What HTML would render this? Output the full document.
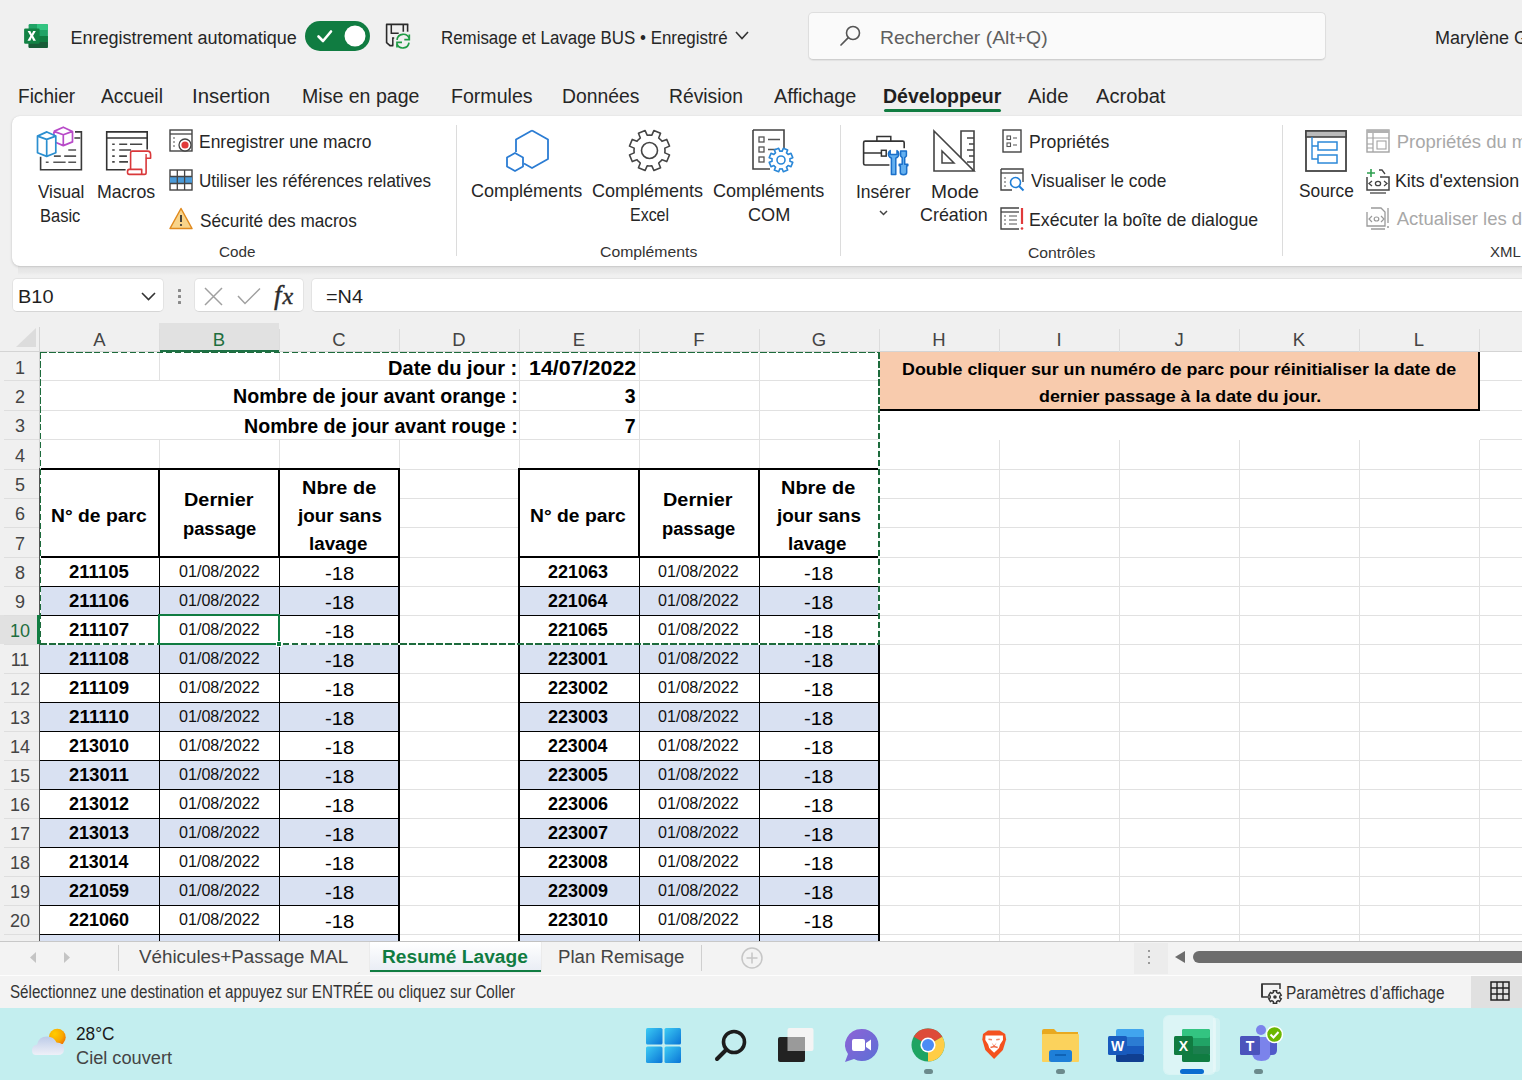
<!DOCTYPE html><html><head><meta charset="utf-8"><style>
html,body{margin:0;padding:0;}
body{width:1522px;height:1080px;position:relative;overflow:hidden;background:#f0f0f0;font-family:"Liberation Sans",sans-serif;}
.t{position:absolute;white-space:nowrap;line-height:1;}
.b{position:absolute;box-sizing:border-box;}
svg{position:absolute;overflow:visible;}
</style></head><body>
<div class="b" style="left:0px;top:0px;width:1522px;height:116px;background:#f0f0f0;"></div>
<svg style="left:20px;top:20px;" width="32" height="32" viewBox="0 0 32 32">
<rect x="8.6" y="4" width="19.3" height="23.9" rx="1.2" fill="#21a366"/>
<path d="M17 4 H26.7 Q27.9 4 27.9 5.2 V10 H17 Z" fill="#33c481"/>
<rect x="8.6" y="16" width="19.3" height="6" fill="#107c41"/>
<path d="M8.6 22 H27.9 V26.7 Q27.9 27.9 26.7 27.9 H9.8 Q8.6 27.9 8.6 26.7 Z" fill="#185c37"/>
<rect x="4.1" y="8.6" width="15.5" height="15.1" rx="1.2" fill="#128244"/>
<path d="M7.6 11 H10.3 L11.75 14.1 L13.2 11 H15.8 L13.1 15.85 L15.9 20.7 H13.2 L11.75 17.5 L10.3 20.7 H7.5 L10.35 15.85 Z" fill="#fff"/>
</svg>
<div id="t0" class="t" style="left:70.56px;transform-origin:0 0;top:28.76px;font-size:18px;color:#262626;font-weight:normal;">Enregistrement automatique</div>
<div class="b" style="left:305px;top:21px;width:65px;height:30px;background:#107c41;border-radius:15px;"></div>
<svg style="left:305px;top:21px;" width="65" height="30" viewBox="0 0 65 30"><path d="M13.5 15.5 L18 20 L26 10.5" stroke="#fff" stroke-width="2.6" fill="none" stroke-linecap="round" stroke-linejoin="round"/><circle cx="50" cy="15" r="10.5" fill="#fff"/></svg>
<svg style="left:380px;top:18px;" width="36" height="36" viewBox="0 0 36 36">
<path d="M28.3 6.4 H6.6 V24.7 L10 27.6 H13.3 M23.3 6.4 V13.7" stroke="#2a2a2a" stroke-width="1.6" fill="none" stroke-linejoin="round"/>
<path d="M27.6 6.4 V13.7" stroke="#2a2a2a" stroke-width="1.6"/>
<path d="M11.3 6.6 V15.3 H18.7" stroke="#2a2a2a" stroke-width="1.5" fill="none"/>
<path d="M14.2 20 H12.8 V27.5" stroke="#2a2a2a" stroke-width="1.5" fill="none"/>
<path d="M17 21.8 A6.3 6.3 0 0 1 29.2 20.5" stroke="#1f9b45" stroke-width="1.7" fill="none"/>
<path d="M24.3 21.6 H29.3 V16.6" stroke="#1f9b45" stroke-width="1.7" fill="none"/>
<path d="M29 24.6 A6.3 6.3 0 0 1 17 26.2" stroke="#1f9b45" stroke-width="1.7" fill="none"/>
<path d="M22 24.4 H17 V29.4" stroke="#1f9b45" stroke-width="1.7" fill="none"/>
</svg>
<div id="t1" class="t" style="left:440.65px;transform-origin:0 0;top:28.76px;font-size:18px;color:#262626;font-weight:normal;transform:scaleX(0.9383);">Remisage et Lavage BUS • Enregistré</div>
<svg style="left:735px;top:31px;" width="14" height="9" viewBox="0 0 14 9"><path d="M1 1 L7 7.5 L13 1" stroke="#333" stroke-width="1.6" fill="none"/></svg>
<div class="b" style="left:808px;top:12px;width:518px;height:48px;background:#fafafa;border:1px solid #dedede;border-bottom-color:#cfcfcf;border-radius:5px;box-shadow:0 1px 1px rgba(0,0,0,0.06);"></div>
<svg style="left:840px;top:25px;" width="22" height="22" viewBox="0 0 22 22"><circle cx="13" cy="8" r="6.5" stroke="#555" stroke-width="1.6" fill="none"/><path d="M8.3 12.7 L1 20" stroke="#555" stroke-width="1.7" stroke-linecap="round"/></svg>
<div id="t2" class="t" style="left:880.45px;transform-origin:0 0;top:29.34px;font-size:18.5px;color:#5f5f5f;font-weight:normal;transform:scaleX(1.0487);">Rechercher (Alt+Q)</div>
<div id="t3" class="t" style="left:1435px;top:28.76px;font-size:18px;color:#262626;font-weight:normal;">Marylène G</div>
<div id="t4" class="t" style="left:17.98px;transform-origin:0 0;top:87.49px;font-size:19.5px;color:#262626;font-weight:normal;transform:scaleX(0.9762);">Fichier</div>
<div id="t5" class="t" style="left:101.20px;transform-origin:0 0;top:87.49px;font-size:19.5px;color:#262626;font-weight:normal;transform:scaleX(0.9848);">Accueil</div>
<div id="t6" class="t" style="left:192.47px;transform-origin:0 0;top:87.49px;font-size:19.5px;color:#262626;font-weight:normal;transform:scaleX(1.0451);">Insertion</div>
<div id="t7" class="t" style="left:301.94px;transform-origin:0 0;top:87.49px;font-size:19.5px;color:#262626;font-weight:normal;transform:scaleX(1.0030);">Mise en page</div>
<div id="t8" class="t" style="left:451.03px;transform-origin:0 0;top:87.49px;font-size:19.5px;color:#262626;font-weight:normal;transform:scaleX(1.0040);">Formules</div>
<div id="t9" class="t" style="left:562.05px;transform-origin:0 0;top:87.49px;font-size:19.5px;color:#262626;font-weight:normal;transform:scaleX(0.9913);">Données</div>
<div id="t10" class="t" style="left:668.86px;transform-origin:0 0;top:87.49px;font-size:19.5px;color:#262626;font-weight:normal;transform:scaleX(0.9893);">Révision</div>
<div id="t11" class="t" style="left:773.50px;transform-origin:0 0;top:87.49px;font-size:19.5px;color:#262626;font-weight:normal;transform:scaleX(1.0170);">Affichage</div>
<div id="t12" class="t" style="left:883.33px;transform-origin:0 0;top:87.49px;font-size:19.5px;color:#1f1f1f;font-weight:bold;transform:scaleX(1.0021);">Développeur</div>
<div id="t13" class="t" style="left:1028.00px;transform-origin:0 0;top:87.49px;font-size:19.5px;color:#262626;font-weight:normal;transform:scaleX(1.0361);">Aide</div>
<div id="t14" class="t" style="left:1096.20px;transform-origin:0 0;top:87.49px;font-size:19.5px;color:#262626;font-weight:normal;transform:scaleX(1.0331);">Acrobat</div>
<div class="b" style="left:884px;top:109px;width:117px;height:3px;background:#107c41;border-radius:1.5px;"></div>
<div class="b" style="left:12px;top:116px;width:1530px;height:150px;background:#fff;border-radius:8px;box-shadow:0 1px 3px rgba(0,0,0,0.16), 0 0 1px rgba(0,0,0,0.10);"></div>
<div class="b" style="left:456px;top:125px;width:1px;height:131px;background:#dcdcdc;"></div>
<div class="b" style="left:840px;top:125px;width:1px;height:131px;background:#dcdcdc;"></div>
<div class="b" style="left:1282px;top:125px;width:1px;height:131px;background:#dcdcdc;"></div>
<svg style="left:30px;top:120px;" width="60" height="60" viewBox="0 0 60 60">
<path d="M45 11.9 H51.4 V49.7 H10.6 V36.7" stroke="#3a3a3a" stroke-width="1.6" fill="none"/>
<path d="M44.4 18 H50.3" stroke="#3a3a3a" stroke-width="1.5"/>
<path d="M38.3 30 H46.1 M23.9 36.1 H30.8 M34.2 36.1 H46.1 M15.8 42.2 H18.6 M23.3 42.2 H35.6 M38.3 42.2 H46.1" stroke="#555" stroke-width="1.6"/>
<path d="M23.9 11.4 L33.3 7.2 L42.5 11.4 V21.9 L33.3 25.6 L26 22.5 M23.9 11.4 V16 M23.9 11.4 L33.3 14.7 L42.5 11.4 M33.3 14.7 V25.6" stroke="#b84ac8" stroke-width="1.7" fill="none" stroke-linejoin="round"/>
<path d="M7.5 16.1 L16.9 11.9 L25.8 16.1 V32.8 L16.7 36.4 L7.5 32.8 Z" stroke="#2b8fd0" stroke-width="1.7" fill="#fff" stroke-linejoin="round"/>
<path d="M7.5 16.1 L16.7 19.4 L25.8 16.1 M16.7 19.4 V36.4" stroke="#2b8fd0" stroke-width="1.7" fill="none" stroke-linejoin="round"/>
</svg>
<div id="t15" class="t" style="left:38.40px;transform-origin:0 0;top:182.94px;font-size:18.5px;color:#262626;font-weight:normal;transform:scaleX(0.9256);">Visual</div>
<div id="t16" class="t" style="left:40.08px;transform-origin:0 0;top:206.54px;font-size:18.5px;color:#262626;font-weight:normal;transform:scaleX(0.8915);">Basic</div>
<svg style="left:100px;top:125px;" width="60" height="60" viewBox="0 0 60 60">
<path d="M47.2 24.4 V6.9 H6.7 V44.7 H25.6" stroke="#333" stroke-width="1.6" fill="none"/>
<path d="M6.7 13 H47.2" stroke="#333" stroke-width="1.5"/>
<path d="M12.2 19.2 H14.7 M19.2 19.2 H27.2 M30 19.2 H42.2 M12.2 25 H14.7 M19.2 25 H31.1 M12.2 31.1 H14.7 M19.2 31.1 H26.9 M12.2 36.9 H14.7 M19.2 36.9 H28" stroke="#444" stroke-width="1.6"/>
<path d="M30.6 44.4 V27.8 Q30.6 26.1 32.3 26.1 H47.6 Q50.6 26.1 50.6 29.7 V33.3 H46.1 V47.7 Q46.1 49.4 44.4 49.4 H29.2 Q27.5 49.4 27.5 46.9 Q27.5 44.4 29.2 44.4 H41.7 V49.4" stroke="#d9383a" stroke-width="1.6" fill="#fff" stroke-linejoin="round"/>
<path d="M46.1 29 V33.3" stroke="#d9383a" stroke-width="1.4"/>
</svg>
<div id="t17" class="t" style="left:97.38px;transform-origin:0 0;top:182.94px;font-size:18.5px;color:#262626;font-weight:normal;transform:scaleX(0.9597);">Macros</div>
<svg style="left:169px;top:129px;" width="24" height="24" viewBox="0 0 24 24">
<rect x="1" y="1" width="22" height="21" stroke="#444" stroke-width="1.4" fill="#fff"/>
<path d="M1 5 H23" stroke="#444" stroke-width="1.3"/>
<path d="M4 9 H6 M4 13 H6 M4 17 H6" stroke="#555" stroke-width="1.2"/>
<circle cx="16" cy="16" r="6" fill="#fff" stroke="#444" stroke-width="1.3"/>
<circle cx="16" cy="16" r="3.6" fill="#e03a3a"/>
</svg>
<div id="t18" class="t" style="left:199.20px;transform-origin:0 0;top:133.14px;font-size:18.5px;color:#262626;font-weight:normal;transform:scaleX(0.9427);">Enregistrer une macro</div>
<svg style="left:169px;top:169px;" width="24" height="22" viewBox="0 0 24 22">
<rect x="1" y="1" width="22" height="20" stroke="#444" stroke-width="1.4" fill="#fff"/>
<rect x="1" y="7.5" width="22" height="7" fill="#4a9ad8"/>
<path d="M1 7.5 H23 M1 14.5 H23 M8.3 1 V21 M15.6 1 V21" stroke="#444" stroke-width="1.3"/>
</svg>
<div id="t19" class="t" style="left:199.32px;transform-origin:0 0;top:172.34px;font-size:18.5px;color:#262626;font-weight:normal;transform:scaleX(0.9206);">Utiliser les références relatives</div>
<svg style="left:169px;top:207px;" width="24" height="23" viewBox="0 0 24 23">
<path d="M12 1.5 L23 21.5 H1 Z" fill="#f8d48a" stroke="#e08a1e" stroke-width="1.5" stroke-linejoin="round"/>
<path d="M12 8 V15" stroke="#333" stroke-width="1.8"/><circle cx="12" cy="18" r="1.1" fill="#333"/>
</svg>
<div id="t20" class="t" style="left:199.83px;transform-origin:0 0;top:211.64px;font-size:18.5px;color:#262626;font-weight:normal;transform:scaleX(0.9298);">Sécurité des macros</div>
<div id="t21" class="t" style="left:218.94px;transform-origin:0 0;top:244.48px;font-size:15.5px;color:#333;font-weight:normal;transform:scaleX(0.9844);">Code</div>
<svg style="left:506px;top:129px;" width="44" height="44" viewBox="0 0 44 44">
<path d="M26 1.5 L42 10.5 V30 L26 39 L18 34.5 M10 23 V10.5 L26 1.5" stroke="#2b7cd3" stroke-width="1.8" fill="none" stroke-linejoin="round"/>
<path d="M9 24 L17 28.5 V37.5 L9 42 L1 37.5 V28.5 Z" stroke="#2b7cd3" stroke-width="1.8" fill="none" stroke-linejoin="round"/>
</svg>
<div id="t22" class="t" style="left:471.40px;transform-origin:0 0;top:182.04px;font-size:18.5px;color:#262626;font-weight:normal;transform:scaleX(0.9743);">Compléments</div>
<svg style="left:628px;top:129px;" width="43" height="43" viewBox="0 0 43 43"><path d="M37.00 21.50 L36.82 23.86 L41.52 25.89 L38.77 32.55 L34.00 30.66 L32.46 32.46 L30.66 34.00 L32.55 38.77 L25.89 41.52 L23.86 36.82 L21.50 37.00 L19.14 36.82 L17.11 41.52 L10.45 38.77 L12.34 34.00 L10.54 32.46 L9.00 30.66 L4.23 32.55 L1.48 25.89 L6.18 23.86 L6.00 21.50 L6.18 19.14 L1.48 17.11 L4.23 10.45 L9.00 12.34 L10.54 10.54 L12.34 9.00 L10.45 4.23 L17.11 1.48 L19.14 6.18 L21.50 6.00 L23.86 6.18 L25.89 1.48 L32.55 4.23 L30.66 9.00 L32.46 10.54 L34.00 12.34 L38.77 10.45 L41.52 17.11 L36.82 19.14 Z" stroke="#444" stroke-width="1.6" fill="none" stroke-linejoin="round"/><circle cx="21.5" cy="21.5" r="8" stroke="#444" stroke-width="1.6" fill="none"/></svg>
<div id="t23" class="t" style="left:592.30px;transform-origin:0 0;top:182.04px;font-size:18.5px;color:#262626;font-weight:normal;transform:scaleX(0.9735);">Compléments</div>
<div id="t24" class="t" style="left:629.52px;transform-origin:0 0;top:205.74px;font-size:18.5px;color:#262626;font-weight:normal;transform:scaleX(0.8627);">Excel</div>
<svg style="left:752px;top:129px;" width="44" height="46" viewBox="0 0 44 46">
<path d="M1 1 H32 V24 M1 1 V40 H18" stroke="#444" stroke-width="1.6" fill="none"/>
<rect x="7" y="8" width="5" height="5" stroke="#555" stroke-width="1.3" fill="none"/>
<rect x="7" y="18" width="5" height="5" stroke="#555" stroke-width="1.3" fill="none"/>
<rect x="7" y="28" width="5" height="5" stroke="#555" stroke-width="1.3" fill="none"/>
<path d="M16 10.5 H28 M16 20.5 H24" stroke="#555" stroke-width="1.3"/>
<path d="M38.00 31.00 L37.92 32.20 L40.77 33.34 L38.98 37.67 L36.15 36.46 L35.36 37.36 L34.46 38.15 L35.67 40.98 L31.34 42.77 L30.20 39.92 L29.00 40.00 L27.80 39.92 L26.66 42.77 L22.33 40.98 L23.54 38.15 L22.64 37.36 L21.85 36.46 L19.02 37.67 L17.23 33.34 L20.08 32.20 L20.00 31.00 L20.08 29.80 L17.23 28.66 L19.02 24.33 L21.85 25.54 L22.64 24.64 L23.54 23.85 L22.33 21.02 L26.66 19.23 L27.80 22.08 L29.00 22.00 L30.20 22.08 L31.34 19.23 L35.67 21.02 L34.46 23.85 L35.36 24.64 L36.15 25.54 L38.98 24.33 L40.77 28.66 L37.92 29.80 Z" stroke="#2b88d8" stroke-width="1.6" fill="#fff" stroke-linejoin="round"/>
<circle cx="29" cy="31" r="4" stroke="#2b88d8" stroke-width="1.6" fill="none"/>
</svg>
<div id="t25" class="t" style="left:713.10px;transform-origin:0 0;top:182.04px;font-size:18.5px;color:#262626;font-weight:normal;transform:scaleX(0.9743);">Compléments</div>
<div id="t26" class="t" style="left:748.09px;transform-origin:0 0;top:205.74px;font-size:18.5px;color:#262626;font-weight:normal;transform:scaleX(0.9804);">COM</div>
<div id="t27" class="t" style="left:599.51px;transform-origin:0 0;top:244.48px;font-size:15.5px;color:#333;font-weight:normal;transform:scaleX(1.0178);">Compléments</div>
<svg style="left:855px;top:125px;" width="60" height="60" viewBox="0 0 60 60">
<path d="M34.4 40 H10.2 Q8.6 40 8.6 38.4 V17.7 Q8.6 16.1 10.2 16.1 H47.6 Q49.2 16.1 49.2 17.7 V23.3" stroke="#333" stroke-width="1.6" fill="#fff"/>
<path d="M21.9 16.1 V11.4 H35.8 V16.1" stroke="#333" stroke-width="1.5" fill="none"/>
<path d="M8.6 28 H26.1" stroke="#333" stroke-width="1.5"/>
<rect x="26.4" y="25.3" width="4.8" height="5.8" stroke="#333" stroke-width="1.5" fill="#fff"/>
<path d="M36.4 33.3 V49.4 H40.8 V33.3 Q44 31.8 43.8 28.6 Q43.6 26.6 42 25.6 V29.6 H35.2 V25.6 Q33.5 26.6 33.4 28.6 Q33.3 31.8 36.4 33.3 Z" fill="#64b0f0" stroke="#1a6fc9" stroke-width="1.5" stroke-linejoin="round"/>
<path d="M45.6 26.1 H51.4 V31 L49.7 32.8 V39.2 H52.8 V40.8 H51.7 V47.5 Q51.7 49.7 48.5 49.7 Q45.3 49.7 45.3 47.5 V40.8 H44.2 V39.2 H47.2 V32.8 L45.6 31 Z" fill="#64b0f0" stroke="#1a6fc9" stroke-width="1.5" stroke-linejoin="round"/>
</svg>
<div id="t28" class="t" style="left:856.12px;transform-origin:0 0;top:182.54px;font-size:18.5px;color:#262626;font-weight:normal;transform:scaleX(0.9465);">Insérer</div>
<svg style="left:879px;top:210px;" width="9" height="6" viewBox="0 0 9 6"><path d="M1 1 L4.5 4.5 L8 1" stroke="#444" stroke-width="1.5" fill="none"/></svg>
<svg style="left:933px;top:130px;" width="44" height="44" viewBox="0 0 44 44">
<path d="M1 1 L41 41 H1 Z" stroke="#444" stroke-width="1.6" fill="none" stroke-linejoin="miter"/>
<path d="M9 21 L21 33 H9 Z" stroke="#444" stroke-width="1.5" fill="none"/>
<path d="M28 28 V1 H41 V41" stroke="#444" stroke-width="1.6" fill="none"/>
<path d="M34 8 H41 M36 14 H41 M34 20 H41 M36 26 H41 M34 32 H41" stroke="#444" stroke-width="1.3"/>
</svg>
<div id="t29" class="t" style="left:930.76px;transform-origin:0 0;top:182.54px;font-size:18.5px;color:#262626;font-weight:normal;transform:scaleX(1.0379);">Mode</div>
<div id="t30" class="t" style="left:920.41px;transform-origin:0 0;top:206.24px;font-size:18.5px;color:#262626;font-weight:normal;transform:scaleX(0.9675);">Création</div>
<svg style="left:1002px;top:129px;" width="20" height="24" viewBox="0 0 20 24">
<rect x="1" y="1" width="18" height="22" stroke="#444" stroke-width="1.4" fill="#fff"/>
<rect x="5" y="7" width="3.5" height="3.5" stroke="#555" stroke-width="1.1" fill="none"/>
<rect x="5" y="14" width="3.5" height="3.5" stroke="#555" stroke-width="1.1" fill="none"/>
<path d="M11 9 H15 M11 16 H15" stroke="#555" stroke-width="1.2"/>
</svg>
<div id="t31" class="t" style="left:1029.29px;transform-origin:0 0;top:133.14px;font-size:18.5px;color:#262626;font-weight:normal;transform:scaleX(0.9520);">Propriétés</div>
<svg style="left:1000px;top:168px;" width="25" height="24" viewBox="0 0 25 24">
<path d="M1 1 H23 V14 M1 1 V22 H12" stroke="#444" stroke-width="1.4" fill="none"/>
<path d="M1 5 H23" stroke="#444" stroke-width="1.3"/>
<path d="M4 10 H6 M4 14 H6 M4 18 H6" stroke="#555" stroke-width="1.2"/>
<circle cx="15.5" cy="14.5" r="5" stroke="#1f7ed6" stroke-width="1.6" fill="#fff"/>
<path d="M19 18 L23.5 22.5" stroke="#1f7ed6" stroke-width="2"/>
</svg>
<div id="t32" class="t" style="left:1030.70px;transform-origin:0 0;top:171.64px;font-size:18.5px;color:#262626;font-weight:normal;transform:scaleX(0.9352);">Visualiser le code</div>
<svg style="left:1000px;top:207px;" width="25" height="24" viewBox="0 0 25 24">
<path d="M19 1 H1 V22 H19" stroke="#444" stroke-width="1.4" fill="none"/>
<path d="M1 5 H19" stroke="#444" stroke-width="1.3"/>
<path d="M4 9 H6 M9 9 H17 M4 13 H6 M9 13 H17 M4 17 H6 M9 17 H17" stroke="#555" stroke-width="1.2"/>
<path d="M22 1 V17" stroke="#e03a3a" stroke-width="2.2"/><circle cx="22" cy="21.5" r="1.3" fill="#e03a3a"/>
</svg>
<div id="t33" class="t" style="left:1029.28px;transform-origin:0 0;top:210.64px;font-size:18.5px;color:#262626;font-weight:normal;transform:scaleX(0.9564);">Exécuter la boîte de dialogue</div>
<div id="t34" class="t" style="left:1027.61px;transform-origin:0 0;top:244.88px;font-size:15.5px;color:#333;font-weight:normal;transform:scaleX(1.0135);">Contrôles</div>
<svg style="left:1305px;top:130px;" width="42" height="42" viewBox="0 0 42 42">
<rect x="1" y="1" width="40" height="40" stroke="#444" stroke-width="1.8" fill="#fff"/>
<rect x="1" y="1" width="40" height="6" fill="#bbb" stroke="#444" stroke-width="1.6"/>
<path d="M7 7 V29 H13 M7 16 H13" stroke="#2b88d8" stroke-width="1.4" fill="none"/>
<rect x="13" y="12" width="19" height="8" stroke="#2b88d8" stroke-width="1.5" fill="none"/>
<rect x="13" y="25" width="19" height="8" stroke="#2b88d8" stroke-width="1.5" fill="none"/>
</svg>
<div id="t35" class="t" style="left:1298.72px;transform-origin:0 0;top:181.74px;font-size:18.5px;color:#262626;font-weight:normal;transform:scaleX(0.9354);">Source</div>
<svg style="left:1366px;top:129px;opacity:0.9;" width="24" height="24" viewBox="0 0 24 24">
<rect x="1" y="1" width="22" height="22" stroke="#9a9a9a" stroke-width="1.4" fill="#fff"/>
<rect x="1" y="1" width="22" height="3" fill="#aaa"/>
<path d="M1 9 H23 M7 4 V23 M1 15 H7 M1 19 H7" stroke="#9a9a9a" stroke-width="1.2"/>
<rect x="11" y="12" width="9" height="8" stroke="#9a9a9a" stroke-width="1.1" fill="none"/>
</svg>
<div id="t36" class="t" style="left:1396.7px;top:132.64px;font-size:18.5px;color:#a8a8a8;font-weight:normal;">Propriétés du mappage</div>
<svg style="left:1366px;top:168px;" width="24" height="25" viewBox="0 0 24 25">
<path d="M1 9 V22 H23 V9 H14" stroke="#444" stroke-width="1.5" fill="none"/>
<path d="M13 2 H16 L19 6" stroke="#444" stroke-width="1.3" fill="none"/>
<path d="M6 13 L3 15.5 L6 18 M18 13 L21 15.5 L18 18" stroke="#444" stroke-width="1.3" fill="none"/>
<ellipse cx="12" cy="15.5" rx="2.6" ry="2.2" stroke="#444" stroke-width="1.3" fill="none"/>
<path d="M4 25 H20" stroke="#444" stroke-width="1.3"/>
<path d="M5 1 V9 M1 5 H9" stroke="#2ea04f" stroke-width="1.6"/>
</svg>
<div id="t37" class="t" style="left:1395.28px;transform-origin:0 0;top:171.84px;font-size:18.5px;color:#262626;font-weight:normal;transform:scaleX(0.9623);">Kits d'extension</div>
<svg style="left:1366px;top:207px;" width="24" height="25" viewBox="0 0 24 25">
<path d="M1 5 V19 H19 V5 L15 1 H5" stroke="#9a9a9a" stroke-width="1.3" fill="none"/>
<path d="M6 9 L3 12 L6 15 M15 9 L18 12 L15 15" stroke="#9a9a9a" stroke-width="1.2" fill="none"/>
<ellipse cx="10.5" cy="12" rx="2.3" ry="2" stroke="#9a9a9a" stroke-width="1.2" fill="none"/>
<path d="M5 22 H19 M22 1 V16" stroke="#9a9a9a" stroke-width="1.3"/><circle cx="22" cy="20" r="1" fill="#9a9a9a"/>
</svg>
<div id="t38" class="t" style="left:1396.7px;top:210.34px;font-size:18.5px;color:#a8a8a8;font-weight:normal;">Actualiser les données</div>
<div id="t39" class="t" style="left:1489.70px;transform-origin:0 0;top:244.38px;font-size:15.5px;color:#333;font-weight:normal;transform:scaleX(0.9652);">XML</div>
<div class="b" style="left:18px;top:266px;width:1504px;height:9px;background:linear-gradient(#c6c6c6 0px,#dedede 1.5px,#e6e6e6 3px,#e8e8e8 6px,#f0f0f0 9px);z-index:0;"></div>
<div class="b" style="left:12px;top:278px;width:152px;height:34px;background:#fff;border:1px solid #e3e3e3;border-bottom-color:#d6d6d6;border-radius:5px;"></div>
<div id="t40" class="t" style="left:18.20px;transform-origin:0 0;top:288.04px;font-size:18.5px;color:#1f1f1f;font-weight:normal;transform:scaleX(1.0777);">B10</div>
<svg style="left:141px;top:292px;" width="15" height="9" viewBox="0 0 15 9"><path d="M1 1 L7.5 7.5 L14 1" stroke="#333" stroke-width="1.6" fill="none"/></svg>
<div class="b" style="left:177.5px;top:289px;width:3px;height:3px;background:#8a8a8a;border-radius:0.5px;"></div>
<div class="b" style="left:177.5px;top:295px;width:3px;height:3px;background:#8a8a8a;border-radius:0.5px;"></div>
<div class="b" style="left:177.5px;top:301px;width:3px;height:3px;background:#8a8a8a;border-radius:0.5px;"></div>
<div class="b" style="left:194px;top:278px;width:110px;height:34px;background:#fff;border:1px solid #e3e3e3;border-bottom-color:#d6d6d6;border-radius:5px;"></div>
<svg style="left:204px;top:287px;" width="19" height="19" viewBox="0 0 19 19"><path d="M1 1 L18 18 M18 1 L1 18" stroke="#a0a0a0" stroke-width="1.5"/></svg>
<svg style="left:237px;top:287px;" width="24" height="18" viewBox="0 0 24 18"><path d="M1 9 L8 16.5 L23 1.5" stroke="#a0a0a0" stroke-width="1.5" fill="none"/></svg>
<div class="t" style="left:274px;top:282px;font-family:'Liberation Serif',serif;font-style:italic;font-size:27px;color:#2b2b2b;letter-spacing:1px;line-height:1;-webkit-text-stroke:0.4px #2b2b2b;">f<span style="font-size:24px;">x</span></div>
<div class="b" style="left:311px;top:278px;width:1230px;height:34px;background:#fff;border:1px solid #e3e3e3;border-bottom-color:#d6d6d6;border-radius:5px;"></div>
<div id="t41" class="t" style="left:326.41px;transform-origin:0 0;top:288.04px;font-size:18.5px;color:#1f1f1f;font-weight:normal;transform:scaleX(1.0720);">=N4</div>
<div class="b" style="left:0px;top:323px;width:1522px;height:29px;background:#f0f0f0;"></div>
<div class="b" style="left:40px;top:352px;width:1482px;height:589px;background:#fff;"></div>
<div class="b" style="left:0px;top:352px;width:40px;height:589px;background:#f0f0f0;"></div>
<svg style="left:16px;top:328px;" width="21" height="20" viewBox="0 0 21 20"><path d="M20 0 V19 H0 Z" fill="#dcdcdc"/></svg>
<div class="b" style="left:159px;top:323px;width:120px;height:29px;background:#e1e1e1;"></div>
<div class="b" style="left:0px;top:351px;width:1522px;height:1px;background:#d4d4d4;"></div>
<div class="b" style="left:159px;top:350px;width:121px;height:2px;background:#1e7145;"></div>
<div class="b" style="left:159px;top:329px;width:1px;height:23px;background:#dcdcdc;"></div>
<div class="b" style="left:279px;top:329px;width:1px;height:23px;background:#dcdcdc;"></div>
<div class="b" style="left:399px;top:329px;width:1px;height:23px;background:#dcdcdc;"></div>
<div class="b" style="left:519px;top:329px;width:1px;height:23px;background:#dcdcdc;"></div>
<div class="b" style="left:639px;top:329px;width:1px;height:23px;background:#dcdcdc;"></div>
<div class="b" style="left:759px;top:329px;width:1px;height:23px;background:#dcdcdc;"></div>
<div class="b" style="left:879px;top:329px;width:1px;height:23px;background:#dcdcdc;"></div>
<div class="b" style="left:999px;top:329px;width:1px;height:23px;background:#dcdcdc;"></div>
<div class="b" style="left:1119px;top:329px;width:1px;height:23px;background:#dcdcdc;"></div>
<div class="b" style="left:1239px;top:329px;width:1px;height:23px;background:#dcdcdc;"></div>
<div class="b" style="left:1359px;top:329px;width:1px;height:23px;background:#dcdcdc;"></div>
<div class="b" style="left:1479px;top:329px;width:1px;height:23px;background:#dcdcdc;"></div>
<div class="b" style="left:39px;top:327px;width:1px;height:25px;background:#d4d4d4;"></div>
<div id="t42" class="t" style="left:-300.5px;width:800px;text-align:center;top:331.14px;font-size:18.5px;color:#444;font-weight:normal;">A</div>
<div id="t43" class="t" style="left:-181.0px;width:800px;text-align:center;top:331.14px;font-size:18.5px;color:#1e6e3e;font-weight:normal;">B</div>
<div id="t44" class="t" style="left:-61.0px;width:800px;text-align:center;top:331.14px;font-size:18.5px;color:#444;font-weight:normal;">C</div>
<div id="t45" class="t" style="left:59.0px;width:800px;text-align:center;top:331.14px;font-size:18.5px;color:#444;font-weight:normal;">D</div>
<div id="t46" class="t" style="left:179.0px;width:800px;text-align:center;top:331.14px;font-size:18.5px;color:#444;font-weight:normal;">E</div>
<div id="t47" class="t" style="left:299.0px;width:800px;text-align:center;top:331.14px;font-size:18.5px;color:#444;font-weight:normal;">F</div>
<div id="t48" class="t" style="left:419.0px;width:800px;text-align:center;top:331.14px;font-size:18.5px;color:#444;font-weight:normal;">G</div>
<div id="t49" class="t" style="left:539.0px;width:800px;text-align:center;top:331.14px;font-size:18.5px;color:#444;font-weight:normal;">H</div>
<div id="t50" class="t" style="left:659.0px;width:800px;text-align:center;top:331.14px;font-size:18.5px;color:#444;font-weight:normal;">I</div>
<div id="t51" class="t" style="left:779.0px;width:800px;text-align:center;top:331.14px;font-size:18.5px;color:#444;font-weight:normal;">J</div>
<div id="t52" class="t" style="left:899.0px;width:800px;text-align:center;top:331.14px;font-size:18.5px;color:#444;font-weight:normal;">K</div>
<div id="t53" class="t" style="left:1019.0px;width:800px;text-align:center;top:331.14px;font-size:18.5px;color:#444;font-weight:normal;">L</div>
<div class="b" style="left:0px;top:615px;width:40px;height:29px;background:#e1e1e1;"></div>
<div class="b" style="left:4px;top:380px;width:36px;height:1px;background:#dedede;"></div>
<div id="t54" class="t" style="left:-380.0px;width:800px;text-align:center;top:358.56px;font-size:18px;color:#444;font-weight:normal;">1</div>
<div class="b" style="left:4px;top:410px;width:36px;height:1px;background:#dedede;"></div>
<div id="t55" class="t" style="left:-380.0px;width:800px;text-align:center;top:387.56px;font-size:18px;color:#444;font-weight:normal;">2</div>
<div class="b" style="left:4px;top:439px;width:36px;height:1px;background:#dedede;"></div>
<div id="t56" class="t" style="left:-380.0px;width:800px;text-align:center;top:417.06px;font-size:18px;color:#444;font-weight:normal;">3</div>
<div class="b" style="left:4px;top:469px;width:36px;height:1px;background:#dedede;"></div>
<div id="t57" class="t" style="left:-380.0px;width:800px;text-align:center;top:446.56px;font-size:18px;color:#444;font-weight:normal;">4</div>
<div class="b" style="left:4px;top:498px;width:36px;height:1px;background:#dedede;"></div>
<div id="t58" class="t" style="left:-380.0px;width:800px;text-align:center;top:476.06px;font-size:18px;color:#444;font-weight:normal;">5</div>
<div class="b" style="left:4px;top:527px;width:36px;height:1px;background:#dedede;"></div>
<div id="t59" class="t" style="left:-380.0px;width:800px;text-align:center;top:505.06px;font-size:18px;color:#444;font-weight:normal;">6</div>
<div class="b" style="left:4px;top:557px;width:36px;height:1px;background:#dedede;"></div>
<div id="t60" class="t" style="left:-380.0px;width:800px;text-align:center;top:534.56px;font-size:18px;color:#444;font-weight:normal;">7</div>
<div class="b" style="left:4px;top:586px;width:36px;height:1px;background:#dedede;"></div>
<div id="t61" class="t" style="left:-380.0px;width:800px;text-align:center;top:564.06px;font-size:18px;color:#444;font-weight:normal;">8</div>
<div class="b" style="left:4px;top:615px;width:36px;height:1px;background:#dedede;"></div>
<div id="t62" class="t" style="left:-380.0px;width:800px;text-align:center;top:593.06px;font-size:18px;color:#444;font-weight:normal;">9</div>
<div class="b" style="left:4px;top:644px;width:36px;height:1px;background:#dedede;"></div>
<div id="t63" class="t" style="left:-380.0px;width:800px;text-align:center;top:622.06px;font-size:18px;color:#1e6e3e;font-weight:normal;">10</div>
<div class="b" style="left:4px;top:673px;width:36px;height:1px;background:#dedede;"></div>
<div id="t64" class="t" style="left:-380.0px;width:800px;text-align:center;top:651.06px;font-size:18px;color:#444;font-weight:normal;">11</div>
<div class="b" style="left:4px;top:702px;width:36px;height:1px;background:#dedede;"></div>
<div id="t65" class="t" style="left:-380.0px;width:800px;text-align:center;top:680.06px;font-size:18px;color:#444;font-weight:normal;">12</div>
<div class="b" style="left:4px;top:731px;width:36px;height:1px;background:#dedede;"></div>
<div id="t66" class="t" style="left:-380.0px;width:800px;text-align:center;top:709.06px;font-size:18px;color:#444;font-weight:normal;">13</div>
<div class="b" style="left:4px;top:760px;width:36px;height:1px;background:#dedede;"></div>
<div id="t67" class="t" style="left:-380.0px;width:800px;text-align:center;top:738.06px;font-size:18px;color:#444;font-weight:normal;">14</div>
<div class="b" style="left:4px;top:789px;width:36px;height:1px;background:#dedede;"></div>
<div id="t68" class="t" style="left:-380.0px;width:800px;text-align:center;top:767.06px;font-size:18px;color:#444;font-weight:normal;">15</div>
<div class="b" style="left:4px;top:818px;width:36px;height:1px;background:#dedede;"></div>
<div id="t69" class="t" style="left:-380.0px;width:800px;text-align:center;top:796.06px;font-size:18px;color:#444;font-weight:normal;">16</div>
<div class="b" style="left:4px;top:847px;width:36px;height:1px;background:#dedede;"></div>
<div id="t70" class="t" style="left:-380.0px;width:800px;text-align:center;top:825.06px;font-size:18px;color:#444;font-weight:normal;">17</div>
<div class="b" style="left:4px;top:876px;width:36px;height:1px;background:#dedede;"></div>
<div id="t71" class="t" style="left:-380.0px;width:800px;text-align:center;top:854.06px;font-size:18px;color:#444;font-weight:normal;">18</div>
<div class="b" style="left:4px;top:905px;width:36px;height:1px;background:#dedede;"></div>
<div id="t72" class="t" style="left:-380.0px;width:800px;text-align:center;top:883.06px;font-size:18px;color:#444;font-weight:normal;">19</div>
<div class="b" style="left:4px;top:934px;width:36px;height:1px;background:#dedede;"></div>
<div id="t73" class="t" style="left:-380.0px;width:800px;text-align:center;top:912.06px;font-size:18px;color:#444;font-weight:normal;">20</div>
<div class="b" style="left:4px;top:963px;width:36px;height:1px;background:#dedede;"></div>
<div id="t74" class="t" style="left:-380.0px;width:800px;text-align:center;top:941.06px;font-size:18px;color:#444;font-weight:normal;">21</div>
<div class="b" style="left:39px;top:352px;width:1px;height:589px;background:#d0d0d0;"></div>
<div class="b" style="left:40px;top:380px;width:839px;height:1px;background:#e1e1e1;"></div>
<div class="b" style="left:1480px;top:380px;width:42px;height:1px;background:#e1e1e1;"></div>
<div class="b" style="left:40px;top:410px;width:839px;height:1px;background:#e1e1e1;"></div>
<div class="b" style="left:1480px;top:410px;width:42px;height:1px;background:#e1e1e1;"></div>
<div class="b" style="left:40px;top:439px;width:839px;height:1px;background:#e1e1e1;"></div>
<div class="b" style="left:1480px;top:439px;width:42px;height:1px;background:#e1e1e1;"></div>
<div class="b" style="left:40px;top:469px;width:1482px;height:1px;background:#e1e1e1;"></div>
<div class="b" style="left:40px;top:498px;width:1482px;height:1px;background:#e1e1e1;"></div>
<div class="b" style="left:40px;top:527px;width:1482px;height:1px;background:#e1e1e1;"></div>
<div class="b" style="left:40px;top:557px;width:1482px;height:1px;background:#e1e1e1;"></div>
<div class="b" style="left:40px;top:586px;width:1482px;height:1px;background:#e1e1e1;"></div>
<div class="b" style="left:40px;top:615px;width:1482px;height:1px;background:#e1e1e1;"></div>
<div class="b" style="left:40px;top:644px;width:1482px;height:1px;background:#e1e1e1;"></div>
<div class="b" style="left:40px;top:673px;width:1482px;height:1px;background:#e1e1e1;"></div>
<div class="b" style="left:40px;top:702px;width:1482px;height:1px;background:#e1e1e1;"></div>
<div class="b" style="left:40px;top:731px;width:1482px;height:1px;background:#e1e1e1;"></div>
<div class="b" style="left:40px;top:760px;width:1482px;height:1px;background:#e1e1e1;"></div>
<div class="b" style="left:40px;top:789px;width:1482px;height:1px;background:#e1e1e1;"></div>
<div class="b" style="left:40px;top:818px;width:1482px;height:1px;background:#e1e1e1;"></div>
<div class="b" style="left:40px;top:847px;width:1482px;height:1px;background:#e1e1e1;"></div>
<div class="b" style="left:40px;top:876px;width:1482px;height:1px;background:#e1e1e1;"></div>
<div class="b" style="left:40px;top:905px;width:1482px;height:1px;background:#e1e1e1;"></div>
<div class="b" style="left:40px;top:934px;width:1482px;height:1px;background:#e1e1e1;"></div>
<div class="b" style="left:40px;top:963px;width:1482px;height:1px;background:#e1e1e1;"></div>
<div class="b" style="left:159px;top:352px;width:1px;height:28px;background:#e1e1e1;"></div>
<div class="b" style="left:159px;top:439px;width:1px;height:30px;background:#e1e1e1;"></div>
<div class="b" style="left:159px;top:469px;width:1px;height:29px;background:#e1e1e1;"></div>
<div class="b" style="left:159px;top:498px;width:1px;height:29px;background:#e1e1e1;"></div>
<div class="b" style="left:159px;top:527px;width:1px;height:30px;background:#e1e1e1;"></div>
<div class="b" style="left:159px;top:557px;width:1px;height:29px;background:#e1e1e1;"></div>
<div class="b" style="left:159px;top:586px;width:1px;height:29px;background:#e1e1e1;"></div>
<div class="b" style="left:159px;top:615px;width:1px;height:29px;background:#e1e1e1;"></div>
<div class="b" style="left:159px;top:644px;width:1px;height:29px;background:#e1e1e1;"></div>
<div class="b" style="left:159px;top:673px;width:1px;height:29px;background:#e1e1e1;"></div>
<div class="b" style="left:159px;top:702px;width:1px;height:29px;background:#e1e1e1;"></div>
<div class="b" style="left:159px;top:731px;width:1px;height:29px;background:#e1e1e1;"></div>
<div class="b" style="left:159px;top:760px;width:1px;height:29px;background:#e1e1e1;"></div>
<div class="b" style="left:159px;top:789px;width:1px;height:29px;background:#e1e1e1;"></div>
<div class="b" style="left:159px;top:818px;width:1px;height:29px;background:#e1e1e1;"></div>
<div class="b" style="left:159px;top:847px;width:1px;height:29px;background:#e1e1e1;"></div>
<div class="b" style="left:159px;top:876px;width:1px;height:29px;background:#e1e1e1;"></div>
<div class="b" style="left:159px;top:905px;width:1px;height:29px;background:#e1e1e1;"></div>
<div class="b" style="left:159px;top:934px;width:1px;height:29px;background:#e1e1e1;"></div>
<div class="b" style="left:279px;top:352px;width:1px;height:28px;background:#e1e1e1;"></div>
<div class="b" style="left:279px;top:439px;width:1px;height:30px;background:#e1e1e1;"></div>
<div class="b" style="left:279px;top:469px;width:1px;height:29px;background:#e1e1e1;"></div>
<div class="b" style="left:279px;top:498px;width:1px;height:29px;background:#e1e1e1;"></div>
<div class="b" style="left:279px;top:527px;width:1px;height:30px;background:#e1e1e1;"></div>
<div class="b" style="left:279px;top:557px;width:1px;height:29px;background:#e1e1e1;"></div>
<div class="b" style="left:279px;top:586px;width:1px;height:29px;background:#e1e1e1;"></div>
<div class="b" style="left:279px;top:615px;width:1px;height:29px;background:#e1e1e1;"></div>
<div class="b" style="left:279px;top:644px;width:1px;height:29px;background:#e1e1e1;"></div>
<div class="b" style="left:279px;top:673px;width:1px;height:29px;background:#e1e1e1;"></div>
<div class="b" style="left:279px;top:702px;width:1px;height:29px;background:#e1e1e1;"></div>
<div class="b" style="left:279px;top:731px;width:1px;height:29px;background:#e1e1e1;"></div>
<div class="b" style="left:279px;top:760px;width:1px;height:29px;background:#e1e1e1;"></div>
<div class="b" style="left:279px;top:789px;width:1px;height:29px;background:#e1e1e1;"></div>
<div class="b" style="left:279px;top:818px;width:1px;height:29px;background:#e1e1e1;"></div>
<div class="b" style="left:279px;top:847px;width:1px;height:29px;background:#e1e1e1;"></div>
<div class="b" style="left:279px;top:876px;width:1px;height:29px;background:#e1e1e1;"></div>
<div class="b" style="left:279px;top:905px;width:1px;height:29px;background:#e1e1e1;"></div>
<div class="b" style="left:279px;top:934px;width:1px;height:29px;background:#e1e1e1;"></div>
<div class="b" style="left:399px;top:439px;width:1px;height:30px;background:#e1e1e1;"></div>
<div class="b" style="left:399px;top:469px;width:1px;height:29px;background:#e1e1e1;"></div>
<div class="b" style="left:399px;top:498px;width:1px;height:29px;background:#e1e1e1;"></div>
<div class="b" style="left:399px;top:527px;width:1px;height:30px;background:#e1e1e1;"></div>
<div class="b" style="left:399px;top:557px;width:1px;height:29px;background:#e1e1e1;"></div>
<div class="b" style="left:399px;top:586px;width:1px;height:29px;background:#e1e1e1;"></div>
<div class="b" style="left:399px;top:615px;width:1px;height:29px;background:#e1e1e1;"></div>
<div class="b" style="left:399px;top:644px;width:1px;height:29px;background:#e1e1e1;"></div>
<div class="b" style="left:399px;top:673px;width:1px;height:29px;background:#e1e1e1;"></div>
<div class="b" style="left:399px;top:702px;width:1px;height:29px;background:#e1e1e1;"></div>
<div class="b" style="left:399px;top:731px;width:1px;height:29px;background:#e1e1e1;"></div>
<div class="b" style="left:399px;top:760px;width:1px;height:29px;background:#e1e1e1;"></div>
<div class="b" style="left:399px;top:789px;width:1px;height:29px;background:#e1e1e1;"></div>
<div class="b" style="left:399px;top:818px;width:1px;height:29px;background:#e1e1e1;"></div>
<div class="b" style="left:399px;top:847px;width:1px;height:29px;background:#e1e1e1;"></div>
<div class="b" style="left:399px;top:876px;width:1px;height:29px;background:#e1e1e1;"></div>
<div class="b" style="left:399px;top:905px;width:1px;height:29px;background:#e1e1e1;"></div>
<div class="b" style="left:399px;top:934px;width:1px;height:29px;background:#e1e1e1;"></div>
<div class="b" style="left:519px;top:352px;width:1px;height:28px;background:#e1e1e1;"></div>
<div class="b" style="left:519px;top:380px;width:1px;height:30px;background:#e1e1e1;"></div>
<div class="b" style="left:519px;top:410px;width:1px;height:29px;background:#e1e1e1;"></div>
<div class="b" style="left:519px;top:439px;width:1px;height:30px;background:#e1e1e1;"></div>
<div class="b" style="left:519px;top:469px;width:1px;height:29px;background:#e1e1e1;"></div>
<div class="b" style="left:519px;top:498px;width:1px;height:29px;background:#e1e1e1;"></div>
<div class="b" style="left:519px;top:527px;width:1px;height:30px;background:#e1e1e1;"></div>
<div class="b" style="left:519px;top:557px;width:1px;height:29px;background:#e1e1e1;"></div>
<div class="b" style="left:519px;top:586px;width:1px;height:29px;background:#e1e1e1;"></div>
<div class="b" style="left:519px;top:615px;width:1px;height:29px;background:#e1e1e1;"></div>
<div class="b" style="left:519px;top:644px;width:1px;height:29px;background:#e1e1e1;"></div>
<div class="b" style="left:519px;top:673px;width:1px;height:29px;background:#e1e1e1;"></div>
<div class="b" style="left:519px;top:702px;width:1px;height:29px;background:#e1e1e1;"></div>
<div class="b" style="left:519px;top:731px;width:1px;height:29px;background:#e1e1e1;"></div>
<div class="b" style="left:519px;top:760px;width:1px;height:29px;background:#e1e1e1;"></div>
<div class="b" style="left:519px;top:789px;width:1px;height:29px;background:#e1e1e1;"></div>
<div class="b" style="left:519px;top:818px;width:1px;height:29px;background:#e1e1e1;"></div>
<div class="b" style="left:519px;top:847px;width:1px;height:29px;background:#e1e1e1;"></div>
<div class="b" style="left:519px;top:876px;width:1px;height:29px;background:#e1e1e1;"></div>
<div class="b" style="left:519px;top:905px;width:1px;height:29px;background:#e1e1e1;"></div>
<div class="b" style="left:519px;top:934px;width:1px;height:29px;background:#e1e1e1;"></div>
<div class="b" style="left:639px;top:352px;width:1px;height:28px;background:#e1e1e1;"></div>
<div class="b" style="left:639px;top:380px;width:1px;height:30px;background:#e1e1e1;"></div>
<div class="b" style="left:639px;top:410px;width:1px;height:29px;background:#e1e1e1;"></div>
<div class="b" style="left:639px;top:439px;width:1px;height:30px;background:#e1e1e1;"></div>
<div class="b" style="left:639px;top:469px;width:1px;height:29px;background:#e1e1e1;"></div>
<div class="b" style="left:639px;top:498px;width:1px;height:29px;background:#e1e1e1;"></div>
<div class="b" style="left:639px;top:527px;width:1px;height:30px;background:#e1e1e1;"></div>
<div class="b" style="left:639px;top:557px;width:1px;height:29px;background:#e1e1e1;"></div>
<div class="b" style="left:639px;top:586px;width:1px;height:29px;background:#e1e1e1;"></div>
<div class="b" style="left:639px;top:615px;width:1px;height:29px;background:#e1e1e1;"></div>
<div class="b" style="left:639px;top:644px;width:1px;height:29px;background:#e1e1e1;"></div>
<div class="b" style="left:639px;top:673px;width:1px;height:29px;background:#e1e1e1;"></div>
<div class="b" style="left:639px;top:702px;width:1px;height:29px;background:#e1e1e1;"></div>
<div class="b" style="left:639px;top:731px;width:1px;height:29px;background:#e1e1e1;"></div>
<div class="b" style="left:639px;top:760px;width:1px;height:29px;background:#e1e1e1;"></div>
<div class="b" style="left:639px;top:789px;width:1px;height:29px;background:#e1e1e1;"></div>
<div class="b" style="left:639px;top:818px;width:1px;height:29px;background:#e1e1e1;"></div>
<div class="b" style="left:639px;top:847px;width:1px;height:29px;background:#e1e1e1;"></div>
<div class="b" style="left:639px;top:876px;width:1px;height:29px;background:#e1e1e1;"></div>
<div class="b" style="left:639px;top:905px;width:1px;height:29px;background:#e1e1e1;"></div>
<div class="b" style="left:639px;top:934px;width:1px;height:29px;background:#e1e1e1;"></div>
<div class="b" style="left:759px;top:352px;width:1px;height:28px;background:#e1e1e1;"></div>
<div class="b" style="left:759px;top:380px;width:1px;height:30px;background:#e1e1e1;"></div>
<div class="b" style="left:759px;top:410px;width:1px;height:29px;background:#e1e1e1;"></div>
<div class="b" style="left:759px;top:439px;width:1px;height:30px;background:#e1e1e1;"></div>
<div class="b" style="left:759px;top:469px;width:1px;height:29px;background:#e1e1e1;"></div>
<div class="b" style="left:759px;top:498px;width:1px;height:29px;background:#e1e1e1;"></div>
<div class="b" style="left:759px;top:527px;width:1px;height:30px;background:#e1e1e1;"></div>
<div class="b" style="left:759px;top:557px;width:1px;height:29px;background:#e1e1e1;"></div>
<div class="b" style="left:759px;top:586px;width:1px;height:29px;background:#e1e1e1;"></div>
<div class="b" style="left:759px;top:615px;width:1px;height:29px;background:#e1e1e1;"></div>
<div class="b" style="left:759px;top:644px;width:1px;height:29px;background:#e1e1e1;"></div>
<div class="b" style="left:759px;top:673px;width:1px;height:29px;background:#e1e1e1;"></div>
<div class="b" style="left:759px;top:702px;width:1px;height:29px;background:#e1e1e1;"></div>
<div class="b" style="left:759px;top:731px;width:1px;height:29px;background:#e1e1e1;"></div>
<div class="b" style="left:759px;top:760px;width:1px;height:29px;background:#e1e1e1;"></div>
<div class="b" style="left:759px;top:789px;width:1px;height:29px;background:#e1e1e1;"></div>
<div class="b" style="left:759px;top:818px;width:1px;height:29px;background:#e1e1e1;"></div>
<div class="b" style="left:759px;top:847px;width:1px;height:29px;background:#e1e1e1;"></div>
<div class="b" style="left:759px;top:876px;width:1px;height:29px;background:#e1e1e1;"></div>
<div class="b" style="left:759px;top:905px;width:1px;height:29px;background:#e1e1e1;"></div>
<div class="b" style="left:759px;top:934px;width:1px;height:29px;background:#e1e1e1;"></div>
<div class="b" style="left:879px;top:352px;width:1px;height:28px;background:#e1e1e1;"></div>
<div class="b" style="left:879px;top:380px;width:1px;height:30px;background:#e1e1e1;"></div>
<div class="b" style="left:879px;top:410px;width:1px;height:29px;background:#e1e1e1;"></div>
<div class="b" style="left:879px;top:439px;width:1px;height:30px;background:#e1e1e1;"></div>
<div class="b" style="left:879px;top:469px;width:1px;height:29px;background:#e1e1e1;"></div>
<div class="b" style="left:879px;top:498px;width:1px;height:29px;background:#e1e1e1;"></div>
<div class="b" style="left:879px;top:527px;width:1px;height:30px;background:#e1e1e1;"></div>
<div class="b" style="left:879px;top:557px;width:1px;height:29px;background:#e1e1e1;"></div>
<div class="b" style="left:879px;top:586px;width:1px;height:29px;background:#e1e1e1;"></div>
<div class="b" style="left:879px;top:615px;width:1px;height:29px;background:#e1e1e1;"></div>
<div class="b" style="left:879px;top:644px;width:1px;height:29px;background:#e1e1e1;"></div>
<div class="b" style="left:879px;top:673px;width:1px;height:29px;background:#e1e1e1;"></div>
<div class="b" style="left:879px;top:702px;width:1px;height:29px;background:#e1e1e1;"></div>
<div class="b" style="left:879px;top:731px;width:1px;height:29px;background:#e1e1e1;"></div>
<div class="b" style="left:879px;top:760px;width:1px;height:29px;background:#e1e1e1;"></div>
<div class="b" style="left:879px;top:789px;width:1px;height:29px;background:#e1e1e1;"></div>
<div class="b" style="left:879px;top:818px;width:1px;height:29px;background:#e1e1e1;"></div>
<div class="b" style="left:879px;top:847px;width:1px;height:29px;background:#e1e1e1;"></div>
<div class="b" style="left:879px;top:876px;width:1px;height:29px;background:#e1e1e1;"></div>
<div class="b" style="left:879px;top:905px;width:1px;height:29px;background:#e1e1e1;"></div>
<div class="b" style="left:879px;top:934px;width:1px;height:29px;background:#e1e1e1;"></div>
<div class="b" style="left:999px;top:439px;width:1px;height:30px;background:#e1e1e1;"></div>
<div class="b" style="left:999px;top:469px;width:1px;height:29px;background:#e1e1e1;"></div>
<div class="b" style="left:999px;top:498px;width:1px;height:29px;background:#e1e1e1;"></div>
<div class="b" style="left:999px;top:527px;width:1px;height:30px;background:#e1e1e1;"></div>
<div class="b" style="left:999px;top:557px;width:1px;height:29px;background:#e1e1e1;"></div>
<div class="b" style="left:999px;top:586px;width:1px;height:29px;background:#e1e1e1;"></div>
<div class="b" style="left:999px;top:615px;width:1px;height:29px;background:#e1e1e1;"></div>
<div class="b" style="left:999px;top:644px;width:1px;height:29px;background:#e1e1e1;"></div>
<div class="b" style="left:999px;top:673px;width:1px;height:29px;background:#e1e1e1;"></div>
<div class="b" style="left:999px;top:702px;width:1px;height:29px;background:#e1e1e1;"></div>
<div class="b" style="left:999px;top:731px;width:1px;height:29px;background:#e1e1e1;"></div>
<div class="b" style="left:999px;top:760px;width:1px;height:29px;background:#e1e1e1;"></div>
<div class="b" style="left:999px;top:789px;width:1px;height:29px;background:#e1e1e1;"></div>
<div class="b" style="left:999px;top:818px;width:1px;height:29px;background:#e1e1e1;"></div>
<div class="b" style="left:999px;top:847px;width:1px;height:29px;background:#e1e1e1;"></div>
<div class="b" style="left:999px;top:876px;width:1px;height:29px;background:#e1e1e1;"></div>
<div class="b" style="left:999px;top:905px;width:1px;height:29px;background:#e1e1e1;"></div>
<div class="b" style="left:999px;top:934px;width:1px;height:29px;background:#e1e1e1;"></div>
<div class="b" style="left:1119px;top:439px;width:1px;height:30px;background:#e1e1e1;"></div>
<div class="b" style="left:1119px;top:469px;width:1px;height:29px;background:#e1e1e1;"></div>
<div class="b" style="left:1119px;top:498px;width:1px;height:29px;background:#e1e1e1;"></div>
<div class="b" style="left:1119px;top:527px;width:1px;height:30px;background:#e1e1e1;"></div>
<div class="b" style="left:1119px;top:557px;width:1px;height:29px;background:#e1e1e1;"></div>
<div class="b" style="left:1119px;top:586px;width:1px;height:29px;background:#e1e1e1;"></div>
<div class="b" style="left:1119px;top:615px;width:1px;height:29px;background:#e1e1e1;"></div>
<div class="b" style="left:1119px;top:644px;width:1px;height:29px;background:#e1e1e1;"></div>
<div class="b" style="left:1119px;top:673px;width:1px;height:29px;background:#e1e1e1;"></div>
<div class="b" style="left:1119px;top:702px;width:1px;height:29px;background:#e1e1e1;"></div>
<div class="b" style="left:1119px;top:731px;width:1px;height:29px;background:#e1e1e1;"></div>
<div class="b" style="left:1119px;top:760px;width:1px;height:29px;background:#e1e1e1;"></div>
<div class="b" style="left:1119px;top:789px;width:1px;height:29px;background:#e1e1e1;"></div>
<div class="b" style="left:1119px;top:818px;width:1px;height:29px;background:#e1e1e1;"></div>
<div class="b" style="left:1119px;top:847px;width:1px;height:29px;background:#e1e1e1;"></div>
<div class="b" style="left:1119px;top:876px;width:1px;height:29px;background:#e1e1e1;"></div>
<div class="b" style="left:1119px;top:905px;width:1px;height:29px;background:#e1e1e1;"></div>
<div class="b" style="left:1119px;top:934px;width:1px;height:29px;background:#e1e1e1;"></div>
<div class="b" style="left:1239px;top:439px;width:1px;height:30px;background:#e1e1e1;"></div>
<div class="b" style="left:1239px;top:469px;width:1px;height:29px;background:#e1e1e1;"></div>
<div class="b" style="left:1239px;top:498px;width:1px;height:29px;background:#e1e1e1;"></div>
<div class="b" style="left:1239px;top:527px;width:1px;height:30px;background:#e1e1e1;"></div>
<div class="b" style="left:1239px;top:557px;width:1px;height:29px;background:#e1e1e1;"></div>
<div class="b" style="left:1239px;top:586px;width:1px;height:29px;background:#e1e1e1;"></div>
<div class="b" style="left:1239px;top:615px;width:1px;height:29px;background:#e1e1e1;"></div>
<div class="b" style="left:1239px;top:644px;width:1px;height:29px;background:#e1e1e1;"></div>
<div class="b" style="left:1239px;top:673px;width:1px;height:29px;background:#e1e1e1;"></div>
<div class="b" style="left:1239px;top:702px;width:1px;height:29px;background:#e1e1e1;"></div>
<div class="b" style="left:1239px;top:731px;width:1px;height:29px;background:#e1e1e1;"></div>
<div class="b" style="left:1239px;top:760px;width:1px;height:29px;background:#e1e1e1;"></div>
<div class="b" style="left:1239px;top:789px;width:1px;height:29px;background:#e1e1e1;"></div>
<div class="b" style="left:1239px;top:818px;width:1px;height:29px;background:#e1e1e1;"></div>
<div class="b" style="left:1239px;top:847px;width:1px;height:29px;background:#e1e1e1;"></div>
<div class="b" style="left:1239px;top:876px;width:1px;height:29px;background:#e1e1e1;"></div>
<div class="b" style="left:1239px;top:905px;width:1px;height:29px;background:#e1e1e1;"></div>
<div class="b" style="left:1239px;top:934px;width:1px;height:29px;background:#e1e1e1;"></div>
<div class="b" style="left:1359px;top:439px;width:1px;height:30px;background:#e1e1e1;"></div>
<div class="b" style="left:1359px;top:469px;width:1px;height:29px;background:#e1e1e1;"></div>
<div class="b" style="left:1359px;top:498px;width:1px;height:29px;background:#e1e1e1;"></div>
<div class="b" style="left:1359px;top:527px;width:1px;height:30px;background:#e1e1e1;"></div>
<div class="b" style="left:1359px;top:557px;width:1px;height:29px;background:#e1e1e1;"></div>
<div class="b" style="left:1359px;top:586px;width:1px;height:29px;background:#e1e1e1;"></div>
<div class="b" style="left:1359px;top:615px;width:1px;height:29px;background:#e1e1e1;"></div>
<div class="b" style="left:1359px;top:644px;width:1px;height:29px;background:#e1e1e1;"></div>
<div class="b" style="left:1359px;top:673px;width:1px;height:29px;background:#e1e1e1;"></div>
<div class="b" style="left:1359px;top:702px;width:1px;height:29px;background:#e1e1e1;"></div>
<div class="b" style="left:1359px;top:731px;width:1px;height:29px;background:#e1e1e1;"></div>
<div class="b" style="left:1359px;top:760px;width:1px;height:29px;background:#e1e1e1;"></div>
<div class="b" style="left:1359px;top:789px;width:1px;height:29px;background:#e1e1e1;"></div>
<div class="b" style="left:1359px;top:818px;width:1px;height:29px;background:#e1e1e1;"></div>
<div class="b" style="left:1359px;top:847px;width:1px;height:29px;background:#e1e1e1;"></div>
<div class="b" style="left:1359px;top:876px;width:1px;height:29px;background:#e1e1e1;"></div>
<div class="b" style="left:1359px;top:905px;width:1px;height:29px;background:#e1e1e1;"></div>
<div class="b" style="left:1359px;top:934px;width:1px;height:29px;background:#e1e1e1;"></div>
<div class="b" style="left:1479px;top:439px;width:1px;height:30px;background:#e1e1e1;"></div>
<div class="b" style="left:1479px;top:469px;width:1px;height:29px;background:#e1e1e1;"></div>
<div class="b" style="left:1479px;top:498px;width:1px;height:29px;background:#e1e1e1;"></div>
<div class="b" style="left:1479px;top:527px;width:1px;height:30px;background:#e1e1e1;"></div>
<div class="b" style="left:1479px;top:557px;width:1px;height:29px;background:#e1e1e1;"></div>
<div class="b" style="left:1479px;top:586px;width:1px;height:29px;background:#e1e1e1;"></div>
<div class="b" style="left:1479px;top:615px;width:1px;height:29px;background:#e1e1e1;"></div>
<div class="b" style="left:1479px;top:644px;width:1px;height:29px;background:#e1e1e1;"></div>
<div class="b" style="left:1479px;top:673px;width:1px;height:29px;background:#e1e1e1;"></div>
<div class="b" style="left:1479px;top:702px;width:1px;height:29px;background:#e1e1e1;"></div>
<div class="b" style="left:1479px;top:731px;width:1px;height:29px;background:#e1e1e1;"></div>
<div class="b" style="left:1479px;top:760px;width:1px;height:29px;background:#e1e1e1;"></div>
<div class="b" style="left:1479px;top:789px;width:1px;height:29px;background:#e1e1e1;"></div>
<div class="b" style="left:1479px;top:818px;width:1px;height:29px;background:#e1e1e1;"></div>
<div class="b" style="left:1479px;top:847px;width:1px;height:29px;background:#e1e1e1;"></div>
<div class="b" style="left:1479px;top:876px;width:1px;height:29px;background:#e1e1e1;"></div>
<div class="b" style="left:1479px;top:905px;width:1px;height:29px;background:#e1e1e1;"></div>
<div class="b" style="left:1479px;top:934px;width:1px;height:29px;background:#e1e1e1;"></div>
<div class="b" style="left:40px;top:557px;width:359px;height:29px;background:#fff;"></div>
<div class="b" style="left:40px;top:586px;width:359px;height:29px;background:#d9e1f2;"></div>
<div class="b" style="left:40px;top:615px;width:359px;height:29px;background:#fff;"></div>
<div class="b" style="left:40px;top:644px;width:359px;height:29px;background:#d9e1f2;"></div>
<div class="b" style="left:40px;top:673px;width:359px;height:29px;background:#fff;"></div>
<div class="b" style="left:40px;top:702px;width:359px;height:29px;background:#d9e1f2;"></div>
<div class="b" style="left:40px;top:731px;width:359px;height:29px;background:#fff;"></div>
<div class="b" style="left:40px;top:760px;width:359px;height:29px;background:#d9e1f2;"></div>
<div class="b" style="left:40px;top:789px;width:359px;height:29px;background:#fff;"></div>
<div class="b" style="left:40px;top:818px;width:359px;height:29px;background:#d9e1f2;"></div>
<div class="b" style="left:40px;top:847px;width:359px;height:29px;background:#fff;"></div>
<div class="b" style="left:40px;top:876px;width:359px;height:29px;background:#d9e1f2;"></div>
<div class="b" style="left:40px;top:905px;width:359px;height:29px;background:#fff;"></div>
<div class="b" style="left:40px;top:934px;width:359px;height:29px;background:#d9e1f2;"></div>
<div class="b" style="left:40px;top:469px;width:359px;height:88px;background:#fff;"></div>
<div class="b" style="left:40px;top:586px;width:359px;height:1px;background:#000;"></div>
<div class="b" style="left:40px;top:615px;width:359px;height:1px;background:#000;"></div>
<div class="b" style="left:40px;top:644px;width:359px;height:1px;background:#000;"></div>
<div class="b" style="left:40px;top:673px;width:359px;height:1px;background:#000;"></div>
<div class="b" style="left:40px;top:702px;width:359px;height:1px;background:#000;"></div>
<div class="b" style="left:40px;top:731px;width:359px;height:1px;background:#000;"></div>
<div class="b" style="left:40px;top:760px;width:359px;height:1px;background:#000;"></div>
<div class="b" style="left:40px;top:789px;width:359px;height:1px;background:#000;"></div>
<div class="b" style="left:40px;top:818px;width:359px;height:1px;background:#000;"></div>
<div class="b" style="left:40px;top:847px;width:359px;height:1px;background:#000;"></div>
<div class="b" style="left:40px;top:876px;width:359px;height:1px;background:#000;"></div>
<div class="b" style="left:40px;top:905px;width:359px;height:1px;background:#000;"></div>
<div class="b" style="left:40px;top:934px;width:359px;height:1px;background:#000;"></div>
<div class="b" style="left:40px;top:963px;width:359px;height:1px;background:#000;"></div>
<div class="b" style="left:159px;top:557px;width:1px;height:384px;background:#000;"></div>
<div class="b" style="left:279px;top:557px;width:1px;height:384px;background:#000;"></div>
<div class="b" style="left:39px;top:468px;width:361px;height:2px;background:#000;"></div>
<div class="b" style="left:39px;top:556px;width:361px;height:2px;background:#000;"></div>
<div class="b" style="left:158px;top:468px;width:2px;height:90px;background:#000;"></div>
<div class="b" style="left:278px;top:468px;width:2px;height:90px;background:#000;"></div>
<div class="b" style="left:39px;top:468px;width:1px;height:473px;background:#555;"></div>
<div class="b" style="left:398px;top:468px;width:2px;height:473px;background:#000;"></div>
<div class="b" style="left:519px;top:557px;width:360px;height:29px;background:#fff;"></div>
<div class="b" style="left:519px;top:586px;width:360px;height:29px;background:#d9e1f2;"></div>
<div class="b" style="left:519px;top:615px;width:360px;height:29px;background:#fff;"></div>
<div class="b" style="left:519px;top:644px;width:360px;height:29px;background:#d9e1f2;"></div>
<div class="b" style="left:519px;top:673px;width:360px;height:29px;background:#fff;"></div>
<div class="b" style="left:519px;top:702px;width:360px;height:29px;background:#d9e1f2;"></div>
<div class="b" style="left:519px;top:731px;width:360px;height:29px;background:#fff;"></div>
<div class="b" style="left:519px;top:760px;width:360px;height:29px;background:#d9e1f2;"></div>
<div class="b" style="left:519px;top:789px;width:360px;height:29px;background:#fff;"></div>
<div class="b" style="left:519px;top:818px;width:360px;height:29px;background:#d9e1f2;"></div>
<div class="b" style="left:519px;top:847px;width:360px;height:29px;background:#fff;"></div>
<div class="b" style="left:519px;top:876px;width:360px;height:29px;background:#d9e1f2;"></div>
<div class="b" style="left:519px;top:905px;width:360px;height:29px;background:#fff;"></div>
<div class="b" style="left:519px;top:934px;width:360px;height:29px;background:#d9e1f2;"></div>
<div class="b" style="left:519px;top:469px;width:360px;height:88px;background:#fff;"></div>
<div class="b" style="left:519px;top:586px;width:360px;height:1px;background:#000;"></div>
<div class="b" style="left:519px;top:615px;width:360px;height:1px;background:#000;"></div>
<div class="b" style="left:519px;top:644px;width:360px;height:1px;background:#000;"></div>
<div class="b" style="left:519px;top:673px;width:360px;height:1px;background:#000;"></div>
<div class="b" style="left:519px;top:702px;width:360px;height:1px;background:#000;"></div>
<div class="b" style="left:519px;top:731px;width:360px;height:1px;background:#000;"></div>
<div class="b" style="left:519px;top:760px;width:360px;height:1px;background:#000;"></div>
<div class="b" style="left:519px;top:789px;width:360px;height:1px;background:#000;"></div>
<div class="b" style="left:519px;top:818px;width:360px;height:1px;background:#000;"></div>
<div class="b" style="left:519px;top:847px;width:360px;height:1px;background:#000;"></div>
<div class="b" style="left:519px;top:876px;width:360px;height:1px;background:#000;"></div>
<div class="b" style="left:519px;top:905px;width:360px;height:1px;background:#000;"></div>
<div class="b" style="left:519px;top:934px;width:360px;height:1px;background:#000;"></div>
<div class="b" style="left:519px;top:963px;width:360px;height:1px;background:#000;"></div>
<div class="b" style="left:639px;top:557px;width:1px;height:384px;background:#000;"></div>
<div class="b" style="left:759px;top:557px;width:1px;height:384px;background:#000;"></div>
<div class="b" style="left:518px;top:468px;width:362px;height:2px;background:#000;"></div>
<div class="b" style="left:518px;top:556px;width:362px;height:2px;background:#000;"></div>
<div class="b" style="left:638px;top:468px;width:2px;height:90px;background:#000;"></div>
<div class="b" style="left:758px;top:468px;width:2px;height:90px;background:#000;"></div>
<div class="b" style="left:518px;top:468px;width:2px;height:473px;background:#000;"></div>
<div class="b" style="left:878px;top:468px;width:2px;height:473px;background:#000;"></div>
<div class="b" style="left:879px;top:352px;width:601px;height:59px;background:#f8cbad;border-right:2px solid #000;border-bottom:2px solid #000;"></div>
<div class="b" style="left:879px;top:411px;width:601px;height:29px;background:#fff;"></div>
<div id="t75" class="t" style="left:902.34px;transform-origin:0 0;top:361.43px;font-size:16.5px;color:#000;font-weight:bold;transform:scaleX(1.0814);">Double cliquer sur un numéro de parc pour réinitialiser la date de</div>
<div id="t76" class="t" style="left:1038.89px;transform-origin:0 0;top:387.53px;font-size:16.5px;color:#000;font-weight:bold;transform:scaleX(1.0796);">dernier passage à la date du jour.</div>
<div id="t77" class="t" style="left:388.30px;transform-origin:0 0;top:359.19px;font-size:19.5px;color:#000;font-weight:bold;transform:scaleX(1.0280);">Date du jour :</div>
<div id="t78" class="t" style="left:529.01px;transform-origin:0 0;top:359.19px;font-size:19.5px;color:#000;font-weight:bold;transform:scaleX(1.0986);">14/07/2022</div>
<div id="t79" class="t" style="left:232.72px;transform-origin:0 0;top:387.29px;font-size:19.5px;color:#000;font-weight:bold;transform:scaleX(1.0067);">Nombre de jour avant orange :</div>
<div id="t80" class="t" style="right:886.5px;top:387.29px;font-size:19.5px;color:#000;font-weight:bold;">3</div>
<div id="t81" class="t" style="left:243.72px;transform-origin:0 0;top:417.09px;font-size:19.5px;color:#000;font-weight:bold;transform:scaleX(1.0063);">Nombre de jour avant rouge :</div>
<div id="t82" class="t" style="right:886.5px;top:417.09px;font-size:19.5px;color:#000;font-weight:bold;">7</div>
<div id="t83" class="t" style="left:51.25px;transform-origin:0 0;top:506.56px;font-size:18px;color:#000;font-weight:bold;transform:scaleX(1.0722);">N° de parc</div>
<div id="t84" class="t" style="left:184.11px;transform-origin:0 0;top:491.26px;font-size:18px;color:#000;font-weight:bold;transform:scaleX(1.1029);">Dernier</div>
<div id="t85" class="t" style="left:182.81px;transform-origin:0 0;top:520.26px;font-size:18px;color:#000;font-weight:bold;transform:scaleX(1.0172);">passage</div>
<div id="t86" class="t" style="left:302.20px;transform-origin:0 0;top:478.86px;font-size:18px;color:#000;font-weight:bold;transform:scaleX(1.1078);">Nbre de</div>
<div id="t87" class="t" style="left:297.58px;transform-origin:0 0;top:507.06px;font-size:18px;color:#000;font-weight:bold;transform:scaleX(1.0483);">jour sans</div>
<div id="t88" class="t" style="left:309.18px;transform-origin:0 0;top:535.46px;font-size:18px;color:#000;font-weight:bold;transform:scaleX(1.0428);">lavage</div>
<div id="t89" class="t" style="left:530.25px;transform-origin:0 0;top:506.56px;font-size:18px;color:#000;font-weight:bold;transform:scaleX(1.0722);">N° de parc</div>
<div id="t90" class="t" style="left:663.11px;transform-origin:0 0;top:491.26px;font-size:18px;color:#000;font-weight:bold;transform:scaleX(1.1029);">Dernier</div>
<div id="t91" class="t" style="left:661.81px;transform-origin:0 0;top:520.26px;font-size:18px;color:#000;font-weight:bold;transform:scaleX(1.0172);">passage</div>
<div id="t92" class="t" style="left:781.20px;transform-origin:0 0;top:478.86px;font-size:18px;color:#000;font-weight:bold;transform:scaleX(1.1078);">Nbre de</div>
<div id="t93" class="t" style="left:776.58px;transform-origin:0 0;top:507.06px;font-size:18px;color:#000;font-weight:bold;transform:scaleX(1.0483);">jour sans</div>
<div id="t94" class="t" style="left:788.18px;transform-origin:0 0;top:535.46px;font-size:18px;color:#000;font-weight:bold;transform:scaleX(1.0428);">lavage</div>
<div id="t95" class="t" style="left:68.94px;transform-origin:0 0;top:564.29px;font-size:17.5px;color:#000;font-weight:bold;transform:scaleX(1.0599);">211105</div>
<div id="t96" class="t" style="left:178.64px;transform-origin:0 0;top:562.90px;font-size:16.3px;color:#111;font-weight:normal;transform:scaleX(0.9901);">01/08/2022</div>
<div id="t97" class="t" style="left:324.79px;transform-origin:0 0;top:564.84px;font-size:18.5px;color:#000;font-weight:normal;transform:scaleX(1.0926);">-18</div>
<div id="t98" class="t" style="left:547.96px;transform-origin:0 0;top:564.29px;font-size:17.5px;color:#000;font-weight:bold;transform:scaleX(1.0273);">221063</div>
<div id="t99" class="t" style="left:657.64px;transform-origin:0 0;top:562.90px;font-size:16.3px;color:#111;font-weight:normal;transform:scaleX(0.9901);">01/08/2022</div>
<div id="t100" class="t" style="left:803.79px;transform-origin:0 0;top:564.84px;font-size:18.5px;color:#000;font-weight:normal;transform:scaleX(1.0926);">-18</div>
<div id="t101" class="t" style="left:68.94px;transform-origin:0 0;top:593.29px;font-size:17.5px;color:#000;font-weight:bold;transform:scaleX(1.0633);">211106</div>
<div id="t102" class="t" style="left:178.64px;transform-origin:0 0;top:591.90px;font-size:16.3px;color:#111;font-weight:normal;transform:scaleX(0.9901);">01/08/2022</div>
<div id="t103" class="t" style="left:324.79px;transform-origin:0 0;top:593.84px;font-size:18.5px;color:#000;font-weight:normal;transform:scaleX(1.0926);">-18</div>
<div id="t104" class="t" style="left:547.97px;transform-origin:0 0;top:593.29px;font-size:17.5px;color:#000;font-weight:bold;transform:scaleX(1.0165);">221064</div>
<div id="t105" class="t" style="left:657.64px;transform-origin:0 0;top:591.90px;font-size:16.3px;color:#111;font-weight:normal;transform:scaleX(0.9901);">01/08/2022</div>
<div id="t106" class="t" style="left:803.79px;transform-origin:0 0;top:593.84px;font-size:18.5px;color:#000;font-weight:normal;transform:scaleX(1.0926);">-18</div>
<div id="t107" class="t" style="left:68.94px;transform-origin:0 0;top:622.29px;font-size:17.5px;color:#000;font-weight:bold;transform:scaleX(1.0650);">211107</div>
<div id="t108" class="t" style="left:178.64px;transform-origin:0 0;top:620.90px;font-size:16.3px;color:#111;font-weight:normal;transform:scaleX(0.9901);">01/08/2022</div>
<div id="t109" class="t" style="left:324.79px;transform-origin:0 0;top:622.84px;font-size:18.5px;color:#000;font-weight:normal;transform:scaleX(1.0926);">-18</div>
<div id="t110" class="t" style="left:547.96px;transform-origin:0 0;top:622.29px;font-size:17.5px;color:#000;font-weight:bold;transform:scaleX(1.0242);">221065</div>
<div id="t111" class="t" style="left:657.64px;transform-origin:0 0;top:620.90px;font-size:16.3px;color:#111;font-weight:normal;transform:scaleX(0.9901);">01/08/2022</div>
<div id="t112" class="t" style="left:803.79px;transform-origin:0 0;top:622.84px;font-size:18.5px;color:#000;font-weight:normal;transform:scaleX(1.0926);">-18</div>
<div id="t113" class="t" style="left:68.94px;transform-origin:0 0;top:651.29px;font-size:17.5px;color:#000;font-weight:bold;transform:scaleX(1.0599);">211108</div>
<div id="t114" class="t" style="left:178.64px;transform-origin:0 0;top:649.90px;font-size:16.3px;color:#111;font-weight:normal;transform:scaleX(0.9901);">01/08/2022</div>
<div id="t115" class="t" style="left:324.79px;transform-origin:0 0;top:651.84px;font-size:18.5px;color:#000;font-weight:normal;transform:scaleX(1.0926);">-18</div>
<div id="t116" class="t" style="left:547.96px;transform-origin:0 0;top:651.29px;font-size:17.5px;color:#000;font-weight:bold;transform:scaleX(1.0242);">223001</div>
<div id="t117" class="t" style="left:657.64px;transform-origin:0 0;top:649.90px;font-size:16.3px;color:#111;font-weight:normal;transform:scaleX(0.9901);">01/08/2022</div>
<div id="t118" class="t" style="left:803.79px;transform-origin:0 0;top:651.84px;font-size:18.5px;color:#000;font-weight:normal;transform:scaleX(1.0926);">-18</div>
<div id="t119" class="t" style="left:68.94px;transform-origin:0 0;top:680.29px;font-size:17.5px;color:#000;font-weight:bold;transform:scaleX(1.0633);">211109</div>
<div id="t120" class="t" style="left:178.64px;transform-origin:0 0;top:678.90px;font-size:16.3px;color:#111;font-weight:normal;transform:scaleX(0.9901);">01/08/2022</div>
<div id="t121" class="t" style="left:324.79px;transform-origin:0 0;top:680.84px;font-size:18.5px;color:#000;font-weight:normal;transform:scaleX(1.0926);">-18</div>
<div id="t122" class="t" style="left:547.96px;transform-origin:0 0;top:680.29px;font-size:17.5px;color:#000;font-weight:bold;transform:scaleX(1.0273);">223002</div>
<div id="t123" class="t" style="left:657.64px;transform-origin:0 0;top:678.90px;font-size:16.3px;color:#111;font-weight:normal;transform:scaleX(0.9901);">01/08/2022</div>
<div id="t124" class="t" style="left:803.79px;transform-origin:0 0;top:680.84px;font-size:18.5px;color:#000;font-weight:normal;transform:scaleX(1.0926);">-18</div>
<div id="t125" class="t" style="left:68.93px;transform-origin:0 0;top:709.29px;font-size:17.5px;color:#000;font-weight:bold;transform:scaleX(1.0822);">211110</div>
<div id="t126" class="t" style="left:178.64px;transform-origin:0 0;top:707.90px;font-size:16.3px;color:#111;font-weight:normal;transform:scaleX(0.9901);">01/08/2022</div>
<div id="t127" class="t" style="left:324.79px;transform-origin:0 0;top:709.84px;font-size:18.5px;color:#000;font-weight:normal;transform:scaleX(1.0926);">-18</div>
<div id="t128" class="t" style="left:547.96px;transform-origin:0 0;top:709.29px;font-size:17.5px;color:#000;font-weight:bold;transform:scaleX(1.0273);">223003</div>
<div id="t129" class="t" style="left:657.64px;transform-origin:0 0;top:707.90px;font-size:16.3px;color:#111;font-weight:normal;transform:scaleX(0.9901);">01/08/2022</div>
<div id="t130" class="t" style="left:803.79px;transform-origin:0 0;top:709.84px;font-size:18.5px;color:#000;font-weight:normal;transform:scaleX(1.0926);">-18</div>
<div id="t131" class="t" style="left:68.96px;transform-origin:0 0;top:738.29px;font-size:17.5px;color:#000;font-weight:bold;transform:scaleX(1.0273);">213010</div>
<div id="t132" class="t" style="left:178.64px;transform-origin:0 0;top:736.90px;font-size:16.3px;color:#111;font-weight:normal;transform:scaleX(0.9901);">01/08/2022</div>
<div id="t133" class="t" style="left:324.79px;transform-origin:0 0;top:738.84px;font-size:18.5px;color:#000;font-weight:normal;transform:scaleX(1.0926);">-18</div>
<div id="t134" class="t" style="left:547.97px;transform-origin:0 0;top:738.29px;font-size:17.5px;color:#000;font-weight:bold;transform:scaleX(1.0165);">223004</div>
<div id="t135" class="t" style="left:657.64px;transform-origin:0 0;top:736.90px;font-size:16.3px;color:#111;font-weight:normal;transform:scaleX(0.9901);">01/08/2022</div>
<div id="t136" class="t" style="left:803.79px;transform-origin:0 0;top:738.84px;font-size:18.5px;color:#000;font-weight:normal;transform:scaleX(1.0926);">-18</div>
<div id="t137" class="t" style="left:68.95px;transform-origin:0 0;top:767.29px;font-size:17.5px;color:#000;font-weight:bold;transform:scaleX(1.0418);">213011</div>
<div id="t138" class="t" style="left:178.64px;transform-origin:0 0;top:765.90px;font-size:16.3px;color:#111;font-weight:normal;transform:scaleX(0.9901);">01/08/2022</div>
<div id="t139" class="t" style="left:324.79px;transform-origin:0 0;top:767.84px;font-size:18.5px;color:#000;font-weight:normal;transform:scaleX(1.0926);">-18</div>
<div id="t140" class="t" style="left:547.96px;transform-origin:0 0;top:767.29px;font-size:17.5px;color:#000;font-weight:bold;transform:scaleX(1.0242);">223005</div>
<div id="t141" class="t" style="left:657.64px;transform-origin:0 0;top:765.90px;font-size:16.3px;color:#111;font-weight:normal;transform:scaleX(0.9901);">01/08/2022</div>
<div id="t142" class="t" style="left:803.79px;transform-origin:0 0;top:767.84px;font-size:18.5px;color:#000;font-weight:normal;transform:scaleX(1.0926);">-18</div>
<div id="t143" class="t" style="left:68.96px;transform-origin:0 0;top:796.29px;font-size:17.5px;color:#000;font-weight:bold;transform:scaleX(1.0273);">213012</div>
<div id="t144" class="t" style="left:178.64px;transform-origin:0 0;top:794.90px;font-size:16.3px;color:#111;font-weight:normal;transform:scaleX(0.9901);">01/08/2022</div>
<div id="t145" class="t" style="left:324.79px;transform-origin:0 0;top:796.84px;font-size:18.5px;color:#000;font-weight:normal;transform:scaleX(1.0926);">-18</div>
<div id="t146" class="t" style="left:547.96px;transform-origin:0 0;top:796.29px;font-size:17.5px;color:#000;font-weight:bold;transform:scaleX(1.0273);">223006</div>
<div id="t147" class="t" style="left:657.64px;transform-origin:0 0;top:794.90px;font-size:16.3px;color:#111;font-weight:normal;transform:scaleX(0.9901);">01/08/2022</div>
<div id="t148" class="t" style="left:803.79px;transform-origin:0 0;top:796.84px;font-size:18.5px;color:#000;font-weight:normal;transform:scaleX(1.0926);">-18</div>
<div id="t149" class="t" style="left:68.96px;transform-origin:0 0;top:825.29px;font-size:17.5px;color:#000;font-weight:bold;transform:scaleX(1.0273);">213013</div>
<div id="t150" class="t" style="left:178.64px;transform-origin:0 0;top:823.90px;font-size:16.3px;color:#111;font-weight:normal;transform:scaleX(0.9901);">01/08/2022</div>
<div id="t151" class="t" style="left:324.79px;transform-origin:0 0;top:825.84px;font-size:18.5px;color:#000;font-weight:normal;transform:scaleX(1.0926);">-18</div>
<div id="t152" class="t" style="left:547.96px;transform-origin:0 0;top:825.29px;font-size:17.5px;color:#000;font-weight:bold;transform:scaleX(1.0289);">223007</div>
<div id="t153" class="t" style="left:657.64px;transform-origin:0 0;top:823.90px;font-size:16.3px;color:#111;font-weight:normal;transform:scaleX(0.9901);">01/08/2022</div>
<div id="t154" class="t" style="left:803.79px;transform-origin:0 0;top:825.84px;font-size:18.5px;color:#000;font-weight:normal;transform:scaleX(1.0926);">-18</div>
<div id="t155" class="t" style="left:68.97px;transform-origin:0 0;top:854.29px;font-size:17.5px;color:#000;font-weight:bold;transform:scaleX(1.0165);">213014</div>
<div id="t156" class="t" style="left:178.64px;transform-origin:0 0;top:852.90px;font-size:16.3px;color:#111;font-weight:normal;transform:scaleX(0.9901);">01/08/2022</div>
<div id="t157" class="t" style="left:324.79px;transform-origin:0 0;top:854.84px;font-size:18.5px;color:#000;font-weight:normal;transform:scaleX(1.0926);">-18</div>
<div id="t158" class="t" style="left:547.96px;transform-origin:0 0;top:854.29px;font-size:17.5px;color:#000;font-weight:bold;transform:scaleX(1.0242);">223008</div>
<div id="t159" class="t" style="left:657.64px;transform-origin:0 0;top:852.90px;font-size:16.3px;color:#111;font-weight:normal;transform:scaleX(0.9901);">01/08/2022</div>
<div id="t160" class="t" style="left:803.79px;transform-origin:0 0;top:854.84px;font-size:18.5px;color:#000;font-weight:normal;transform:scaleX(1.0926);">-18</div>
<div id="t161" class="t" style="left:68.96px;transform-origin:0 0;top:883.29px;font-size:17.5px;color:#000;font-weight:bold;transform:scaleX(1.0273);">221059</div>
<div id="t162" class="t" style="left:178.64px;transform-origin:0 0;top:881.90px;font-size:16.3px;color:#111;font-weight:normal;transform:scaleX(0.9901);">01/08/2022</div>
<div id="t163" class="t" style="left:324.79px;transform-origin:0 0;top:883.84px;font-size:18.5px;color:#000;font-weight:normal;transform:scaleX(1.0926);">-18</div>
<div id="t164" class="t" style="left:547.96px;transform-origin:0 0;top:883.29px;font-size:17.5px;color:#000;font-weight:bold;transform:scaleX(1.0273);">223009</div>
<div id="t165" class="t" style="left:657.64px;transform-origin:0 0;top:881.90px;font-size:16.3px;color:#111;font-weight:normal;transform:scaleX(0.9901);">01/08/2022</div>
<div id="t166" class="t" style="left:803.79px;transform-origin:0 0;top:883.84px;font-size:18.5px;color:#000;font-weight:normal;transform:scaleX(1.0926);">-18</div>
<div id="t167" class="t" style="left:68.96px;transform-origin:0 0;top:912.29px;font-size:17.5px;color:#000;font-weight:bold;transform:scaleX(1.0273);">221060</div>
<div id="t168" class="t" style="left:178.64px;transform-origin:0 0;top:910.90px;font-size:16.3px;color:#111;font-weight:normal;transform:scaleX(0.9901);">01/08/2022</div>
<div id="t169" class="t" style="left:324.79px;transform-origin:0 0;top:912.84px;font-size:18.5px;color:#000;font-weight:normal;transform:scaleX(1.0926);">-18</div>
<div id="t170" class="t" style="left:547.96px;transform-origin:0 0;top:912.29px;font-size:17.5px;color:#000;font-weight:bold;transform:scaleX(1.0273);">223010</div>
<div id="t171" class="t" style="left:657.64px;transform-origin:0 0;top:910.90px;font-size:16.3px;color:#111;font-weight:normal;transform:scaleX(0.9901);">01/08/2022</div>
<div id="t172" class="t" style="left:803.79px;transform-origin:0 0;top:912.84px;font-size:18.5px;color:#000;font-weight:normal;transform:scaleX(1.0926);">-18</div>
<div class="b" style="left:40px;top:352px;width:840px;height:1px;background:repeating-linear-gradient(90deg,#1d6b3c 0 6.5px,#f4fff8 6.5px 9px);"></div>
<div class="b" style="left:40px;top:643px;width:840px;height:2px;background:repeating-linear-gradient(90deg,#1d6b3c 0 6.5px,#f4fff8 6.5px 9px);"></div>
<div class="b" style="left:40px;top:352px;width:1px;height:293px;background:repeating-linear-gradient(180deg,#1d6b3c 0 6.5px,#f4fff8 6.5px 9px);"></div>
<div class="b" style="left:878px;top:352px;width:2px;height:293px;background:repeating-linear-gradient(180deg,#1d6b3c 0 6.5px,#f4fff8 6.5px 9px);"></div>
<div class="b" style="left:158px;top:614px;width:122px;height:31px;border:2px solid #107c41;"></div>
<div class="b" style="left:276px;top:641px;width:6px;height:6px;background:#107c41;border:1px solid #fff;"></div>
<div class="b" style="left:37px;top:615px;width:3px;height:29px;background:#107c41;"></div>
<div class="b" style="left:0px;top:941px;width:1522px;height:1px;background:#c8c8c8;"></div>
<div class="b" style="left:0px;top:942px;width:1522px;height:33px;background:#f3f3f3;"></div>
<svg style="left:28px;top:951px;" width="10" height="13" viewBox="0 0 10 13"><path d="M8 1 L2 6.5 L8 12 Z" fill="#c4c4c4"/></svg>
<svg style="left:62px;top:951px;" width="10" height="13" viewBox="0 0 10 13"><path d="M2 1 L8 6.5 L2 12 Z" fill="#c4c4c4"/></svg>
<div class="b" style="left:118px;top:945px;width:1px;height:26px;background:#cfcfcf;"></div>
<div id="t173" class="t" style="left:139.40px;transform-origin:0 0;top:948.36px;font-size:18px;color:#444;font-weight:normal;transform:scaleX(1.0426);">Véhicules+Passage MAL</div>
<div class="b" style="left:370px;top:942px;width:171px;height:30px;background:linear-gradient(#ffffff,#e8ecf4);box-shadow:0 0 1px rgba(0,0,0,0.2);"></div>
<div class="b" style="left:370px;top:970px;width:171px;height:2px;background:#107c41;"></div>
<div id="t174" class="t" style="left:382.26px;transform-origin:0 0;top:948.36px;font-size:18px;color:#107c41;font-weight:bold;transform:scaleX(1.0638);">Resumé Lavage</div>
<div id="t175" class="t" style="left:557.71px;transform-origin:0 0;top:948.36px;font-size:18px;color:#444;font-weight:normal;transform:scaleX(1.0361);">Plan Remisage</div>
<div class="b" style="left:701px;top:945px;width:1px;height:26px;background:#cfcfcf;"></div>
<svg style="left:741px;top:947px;" width="22" height="22" viewBox="0 0 22 22"><circle cx="11" cy="11" r="10" stroke="#c6c6c6" stroke-width="1.5" fill="none"/><path d="M11 5.5 V16.5 M5.5 11 H16.5" stroke="#c6c6c6" stroke-width="1.5"/></svg>
<div class="b" style="left:1134px;top:943px;width:34px;height:31px;background:#ececec;"></div>
<div class="b" style="left:1148px;top:950px;width:2px;height:2px;background:#9a9a9a;"></div>
<div class="b" style="left:1148px;top:956px;width:2px;height:2px;background:#9a9a9a;"></div>
<div class="b" style="left:1148px;top:962px;width:2px;height:2px;background:#9a9a9a;"></div>
<svg style="left:1175px;top:951px;" width="10" height="12" viewBox="0 0 10 12"><path d="M10 0 V12 L0 6 Z" fill="#6d6d6d"/></svg>
<div class="b" style="left:1193px;top:951px;width:340px;height:12px;background:#6d6d6d;border-radius:6px;"></div>
<div class="b" style="left:0px;top:975px;width:1522px;height:1px;background:#fdfdfd;"></div>
<div class="b" style="left:0px;top:976px;width:1522px;height:32px;background:#f3f3f3;"></div>
<div id="t176" class="t" style="left:10.12px;transform-origin:0 0;top:983.79px;font-size:17.5px;color:#333;font-weight:normal;transform:scaleX(0.8667);">Sélectionnez une destination et appuyez sur ENTRÉE ou cliquez sur Coller</div>
<svg style="left:1260px;top:983px;" width="23" height="20" viewBox="0 0 23 20">
<path d="M9 14 H2 V1 H20 V6" stroke="#333" stroke-width="1.5" fill="none"/>
<path d="M2 1 V14" stroke="#333" stroke-width="1.5"/>
</svg>
<svg style="left:1268px;top:990px;" width="14" height="14" viewBox="0 0 14 14"><path d="M11.80 7.00 L11.72 7.85 L13.28 8.68 L11.60 11.60 L10.10 10.67 L9.40 11.16 L8.63 11.52 L8.68 13.28 L5.32 13.28 L5.37 11.52 L4.60 11.16 L3.90 10.67 L2.40 11.60 L0.72 8.68 L2.28 7.85 L2.20 7.00 L2.28 6.15 L0.72 5.32 L2.40 2.40 L3.90 3.33 L4.60 2.84 L5.37 2.48 L5.32 0.72 L8.68 0.72 L8.63 2.48 L9.40 2.84 L10.10 3.33 L11.60 2.40 L13.28 5.32 L11.72 6.15 Z" stroke="#333" stroke-width="1.4" fill="#f3f3f3"/><circle cx="7" cy="7" r="1.8" fill="#333"/></svg>
<div id="t177" class="t" style="left:1285.77px;transform-origin:0 0;top:984.59px;font-size:17.5px;color:#333;font-weight:normal;transform:scaleX(0.8821);">Paramètres d’affichage</div>
<div class="b" style="left:1471px;top:976px;width:51px;height:32px;background:#e0e0e0;"></div>
<svg style="left:1490px;top:981px;" width="20" height="20" viewBox="0 0 20 20"><rect x="1" y="1" width="18" height="18" stroke="#222" stroke-width="1.5" fill="none"/><path d="M7 1 V19 M13 1 V19 M1 7 H19 M1 13 H19" stroke="#222" stroke-width="1.4"/></svg>
<div class="b" style="left:0px;top:1008px;width:1522px;height:72px;background:#c3eeef;"></div>
<svg style="left:25px;top:1020px;" width="50" height="45" viewBox="0 0 50 45">
<defs><radialGradient id="sun" cx="0.35" cy="0.3" r="0.8"><stop offset="0" stop-color="#ffcc00"/><stop offset="0.6" stop-color="#f9a800"/><stop offset="1" stop-color="#ee6a00"/></radialGradient>
<linearGradient id="cl" x1="0" y1="0" x2="0" y2="1"><stop offset="0" stop-color="#bccbe8"/><stop offset="0.5" stop-color="#d6def0"/><stop offset="1" stop-color="#eef0f8"/></linearGradient></defs>
<circle cx="32.3" cy="17.2" r="8.4" fill="url(#sun)"/>
<path d="M11 35 Q7 35 7 30.5 Q7 25.5 12 24.8 Q13.5 16.5 22 16.5 Q29 16.5 31.5 22.5 Q39 22.5 39 29 Q39 35 33 35 Z" fill="url(#cl)"/>
</svg>
<div id="t178" class="t" style="left:76.14px;transform-origin:0 0;top:1026.19px;font-size:17.5px;color:#1a1a1a;font-weight:normal;transform:scaleX(0.9855);">28°C</div>
<div id="t179" class="t" style="left:76.09px;transform-origin:0 0;top:1050.19px;font-size:17.5px;color:#444;font-weight:normal;transform:scaleX(1.0389);">Ciel couvert</div>
<svg style="left:646px;top:1028px;" width="35" height="35" viewBox="0 0 35 35">
<defs><linearGradient id="win" x1="0" y1="0" x2="1" y2="1"><stop offset="0" stop-color="#3ccbf4"/><stop offset="1" stop-color="#0a74d6"/></linearGradient></defs>
<rect x="0" y="0" width="16.5" height="16.5" rx="1.5" fill="url(#win)"/>
<rect x="18.5" y="0" width="16.5" height="16.5" rx="1.5" fill="url(#win)"/>
<rect x="0" y="18.5" width="16.5" height="16.5" rx="1.5" fill="url(#win)"/>
<rect x="18.5" y="18.5" width="16.5" height="16.5" rx="1.5" fill="url(#win)"/>
</svg>
<svg style="left:714px;top:1029px;" width="33" height="34" viewBox="0 0 33 34"><circle cx="20" cy="13" r="10.5" stroke="#1c1c1c" stroke-width="3.6" fill="none"/><path d="M12.5 20.5 L3 30" stroke="#1c1c1c" stroke-width="4" stroke-linecap="round"/></svg>
<svg style="left:778px;top:1028px;" width="36" height="35" viewBox="0 0 36 35">
<rect x="9.5" y="0" width="26" height="23" rx="2" fill="#f4f4f4"/>
<rect x="0" y="9" width="27" height="25" rx="2" fill="#222"/>
<rect x="9.5" y="9" width="17.5" height="14" fill="#9a9a9a"/>
</svg>
<svg style="left:844px;top:1028px;" width="35" height="35" viewBox="0 0 35 35">
<defs><linearGradient id="mt" x1="0" y1="0" x2="1" y2="1"><stop offset="0" stop-color="#8e63d6"/><stop offset="1" stop-color="#5b6fd6"/></linearGradient></defs>
<path d="M17.5 1 A16.5 16 0 1 1 10 31 L1 34 L4 26 A16.5 16 0 0 1 17.5 1 Z" fill="url(#mt)"/>
<rect x="8" y="11" width="13" height="12" rx="2" fill="#fff"/>
<path d="M22 15 L27 11.5 V22.5 L22 19 Z" fill="#fff"/>
</svg>
<svg style="left:911px;top:1028px;" width="34" height="34" viewBox="0 0 34 34">
<circle cx="17" cy="17" r="16.5" fill="#1da462"/>
<path d="M17 17 L2.7 8.75 A16.5 16.5 0 0 1 31.3 8.75 Z" fill="#dd4b39"/>
<path d="M17 17 L31.3 8.75 A16.5 16.5 0 0 1 17 33.5 Z" fill="#ffcd46"/>
<circle cx="17" cy="17" r="7.6" fill="#fff"/>
<circle cx="17" cy="17" r="6" fill="#4c8bf5"/>
</svg>
<div class="b" style="left:924px;top:1069px;width:9px;height:5px;background:#6b8a8c;border-radius:2.5px;"></div>
<svg style="left:970px;top:1020px;" width="50" height="50" viewBox="0 0 50 50">
<path d="M18 10.6 H29.6 L35.2 13.9 L36.1 19.4 L32.9 30 L24.1 38.9 L15.3 30 L12.3 19.4 L13 13.9 Z" fill="#f4511e"/>
<path d="M15.5 15.6 H32.9 L33 20 L30 24.5 L29 28 L26.5 30.5 L24.1 32.8 L21.7 30.5 L19.2 28 L18.2 24.5 L15.3 20 Z" fill="#fff"/>
<path d="M18.5 19.2 L22 19.8 M26.2 19.8 L29.7 19.2" stroke="#f08a6a" stroke-width="1.4"/>
<path d="M21.5 22.5 L24.1 25.5 L26.7 22.5 L24.1 27 Z" fill="#f06a45"/>
<path d="M20.5 27.5 L24.1 26.5 L27.7 27.5" stroke="#f06a45" stroke-width="1.3" fill="none"/>
</svg>
<svg style="left:1042px;top:1029px;" width="37" height="33" viewBox="0 0 37 33">
<path d="M0 2 Q0 0 2 0 H12 L15 3 H36 V32 H0 Z" fill="#e8a920"/>
<rect x="0" y="5" width="37" height="28" rx="1" fill="#fbd25c"/>
<rect x="7" y="21" width="23" height="12" rx="2.5" fill="#1e7fd8"/>
<path d="M13 26 H24" stroke="#0a58a8" stroke-width="1.4"/>
</svg>
<div class="b" style="left:1056px;top:1069px;width:9px;height:5px;background:#6b8a8c;border-radius:2.5px;"></div>
<svg style="left:1108px;top:1029px;" width="36" height="33" viewBox="0 0 36 33">
<rect x="8" y="0" width="28" height="33" rx="2" fill="#41a5ee"/>
<rect x="8" y="8" width="28" height="9" fill="#2b7cd3"/>
<rect x="8" y="17" width="28" height="8" fill="#185abd"/>
<rect x="8" y="25" width="28" height="8" rx="2" fill="#103f91"/>
<rect x="0" y="7" width="19" height="19" rx="1.5" fill="#185abd"/>
<text x="9.5" y="22" font-family="Liberation Sans" font-weight="bold" font-size="14" fill="#fff" text-anchor="middle">W</text>
</svg>
<div class="b" style="left:1164px;top:1016px;width:51px;height:58px;background:rgba(255,255,255,0.42);border-radius:5px;box-shadow:0 0 0 1px rgba(255,255,255,0.35);"></div>
<div class="b" style="left:1213px;top:1018px;width:7px;height:54px;background:rgba(255,255,255,0.25);border-radius:0 4px 4px 0;"></div>
<svg style="left:1174px;top:1029px;" width="36" height="33" viewBox="0 0 36 33">
<rect x="8" y="0" width="28" height="33" rx="2" fill="#21a366"/>
<rect x="8" y="0" width="28" height="9" rx="2" fill="#33c481"/>
<rect x="8" y="17" width="28" height="8" fill="#185c37" opacity="0.5"/>
<rect x="8" y="25" width="28" height="8" rx="2" fill="#107c41"/>
<rect x="0" y="7" width="19" height="19" rx="1.5" fill="#107c41"/>
<text x="9.5" y="22" font-family="Liberation Sans" font-weight="bold" font-size="14" fill="#fff" text-anchor="middle">X</text>
</svg>
<div class="b" style="left:1180px;top:1069px;width:24px;height:5px;background:#0a6cd0;border-radius:2.5px;"></div>
<svg style="left:1240px;top:1024px;" width="44" height="38" viewBox="0 0 44 38">
<circle cx="21" cy="6" r="5" fill="#7b83eb"/>
<path d="M12 13 H31 V28 Q31 37 21.5 37 Q12 37 12 28 Z" fill="#7b83eb"/>
<path d="M30 15 H37 V26 Q37 31 32 31 H30 Z" fill="#5059c9"/>
<rect x="0" y="12" width="20" height="19" rx="1.5" fill="#4b53bc"/>
<text x="10" y="27" font-family="Liberation Sans" font-weight="bold" font-size="14" fill="#fff" text-anchor="middle">T</text>
<circle cx="34.5" cy="10.5" r="8" fill="#6bb700" stroke="#fff" stroke-width="1.5"/>
<path d="M30.5 10.5 L33.5 13.5 L38.5 8" stroke="#fff" stroke-width="2" fill="none"/>
</svg>
<div class="b" style="left:1254px;top:1069px;width:9px;height:5px;background:#6b8a8c;border-radius:2.5px;"></div>
</body></html>
